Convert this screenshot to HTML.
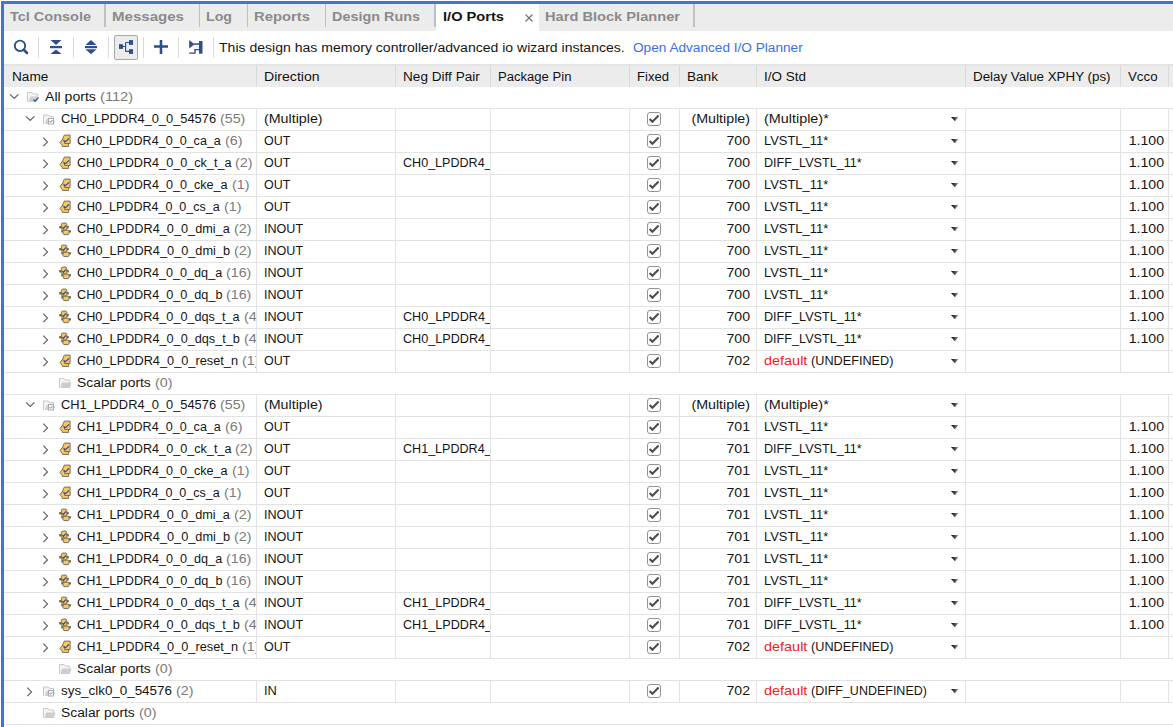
<!DOCTYPE html>
<html><head><meta charset="utf-8"><style>
html,body{margin:0;padding:0;background:#fff;width:1173px;height:727px;overflow:hidden;position:relative}
.r{position:absolute;display:block}
.t{position:absolute;white-space:nowrap;font-family:"Liberation Sans",sans-serif;font-size:12.5px;line-height:16px;color:#141414}
.clip{position:absolute;overflow:hidden}
</style></head><body>
<div class="r" style="left:1px;top:1px;width:1172px;height:3px;background:#4076cc;"></div>
<div class="r" style="left:1px;top:1px;width:3px;height:726px;background:#4076cc;"></div>
<div class="r" style="left:4px;top:4px;width:1169px;height:27px;background:#ececec;"></div>
<div class="r" style="left:104px;top:4px;width:2px;height:23px;background:#c0c0c0;"></div>
<div class="r" style="left:199px;top:4px;width:1px;height:23px;background:#c0c0c0;"></div>
<div class="r" style="left:247px;top:4px;width:1px;height:23px;background:#c0c0c0;"></div>
<div class="r" style="left:325px;top:4px;width:1px;height:23px;background:#c0c0c0;"></div>
<div class="r" style="left:434px;top:4px;width:2px;height:23px;background:#c0c0c0;"></div>
<div class="r" style="left:693px;top:4px;width:2px;height:23px;background:#c0c0c0;"></div>
<div class="r" style="left:436px;top:4px;width:103px;height:27px;background:#ffffff;"></div>
<div class="t" style="left:10px;top:9px;color:#8a8a8a;font-weight:bold;font-size:13.0px;transform:scaleX(1.1139);transform-origin:0 0;">Tcl Console</div>
<div class="t" style="left:112px;top:9px;color:#8a8a8a;font-weight:bold;font-size:13.0px;transform:scaleX(1.1584);transform-origin:0 0;">Messages</div>
<div class="t" style="left:206px;top:9px;color:#8a8a8a;font-weight:bold;font-size:13.0px;transform:scaleX(1.0911);transform-origin:0 0;">Log</div>
<div class="t" style="left:254px;top:9px;color:#8a8a8a;font-weight:bold;font-size:13.0px;transform:scaleX(1.1399);transform-origin:0 0;">Reports</div>
<div class="t" style="left:332px;top:9px;color:#8a8a8a;font-weight:bold;font-size:13.0px;transform:scaleX(1.1074);transform-origin:0 0;">Design Runs</div>
<div class="t" style="left:545px;top:9px;color:#8a8a8a;font-weight:bold;font-size:13.0px;transform:scaleX(1.1256);transform-origin:0 0;">Hard Block Planner</div>
<div class="t" style="left:443px;top:9px;font-weight:bold;font-size:13.0px;transform:scaleX(1.1257);transform-origin:0 0;">I/O Ports</div>
<svg class="r" style="left:524px;top:13px" width="11" height="11"><path d="M1.5 1.5L8.5 8.5M8.5 1.5L1.5 8.5" stroke="#737373" stroke-width="1.2" fill="none"/></svg>
<div class="r" style="left:38px;top:37px;width:1px;height:21px;background:#dadada;"></div>
<div class="r" style="left:73px;top:37px;width:1px;height:21px;background:#dadada;"></div>
<div class="r" style="left:108px;top:37px;width:1px;height:21px;background:#dadada;"></div>
<div class="r" style="left:143px;top:37px;width:1px;height:21px;background:#dadada;"></div>
<div class="r" style="left:178px;top:37px;width:1px;height:21px;background:#dadada;"></div>
<div class="r" style="left:213px;top:37px;width:1px;height:21px;background:#dadada;"></div>
<svg class="r" style="left:12px;top:38px" width="18" height="18"><circle cx="8" cy="7.8" r="5.2" stroke="#2d4e8c" stroke-width="1.9" fill="none"/><path d="M12 12L15 15" stroke="#2d4e8c" stroke-width="2.6" stroke-linecap="round"/></svg>
<svg class="r" style="left:49px;top:39px" width="15" height="17"><path d="M1.5 1H12.5L7 6Z" fill="#2d4e8c"/><rect x="1" y="7" width="12" height="2.2" fill="#2d4e8c"/><path d="M1.5 15H12.5L7 10.5Z" fill="#2d4e8c"/></svg>
<svg class="r" style="left:84px;top:39px" width="15" height="17"><path d="M1.5 6H12.5L7 1Z" fill="#2d4e8c"/><rect x="1" y="7" width="12" height="2.2" fill="#2d4e8c"/><path d="M1.5 10.2H12.5L7 15.2Z" fill="#2d4e8c"/></svg>
<div class="r" style="left:114px;top:35px;width:22px;height:23px;background:#ececec;border:1px solid #a9a9a9;border-radius:2px"></div>
<svg class="r" style="left:118px;top:39px" width="17" height="17"><rect x="1" y="5.2" width="4" height="4.7" fill="#2d4e8c"/><rect x="11" y="1.1" width="4" height="4.8" fill="#2d4e8c"/><rect x="11" y="10.2" width="4" height="4.7" fill="#2d4e8c"/><path d="M5 7.5H7.6M7.6 3.5V12.8M7.6 3.5H11M7.6 12.4H11" stroke="#2d4e8c" stroke-width="1.1" fill="none"/></svg>
<svg class="r" style="left:153px;top:39px" width="16" height="16"><path d="M1 7.5H15M8 1V15" stroke="#2d4e8c" stroke-width="2.6" fill="none"/></svg>
<svg class="r" style="left:188px;top:39px" width="16" height="16"><path d="M1.2 1.1L6.5 5.2L1.2 9.4Z" fill="#2d4e8c"/><rect x="6" y="4.3" width="5.5" height="1.5" fill="#2d4e8c"/><rect x="11" y="2" width="3.5" height="12.7" fill="#2d4e8c"/><path d="M1.2 14.1H7V10.6H11" stroke="#2d4e8c" stroke-width="1.4" fill="none"/></svg>
<div class="t" style="left:219px;top:40px;transform:scaleX(1.1230);transform-origin:0 0;">This design has memory controller/advanced io wizard instances.</div>
<div class="t" style="left:633px;top:40px;color:#3a6ee8;transform:scaleX(1.0904);transform-origin:0 0;">Open Advanced I/O Planner</div>
<div class="r" style="left:4px;top:64px;width:1169px;height:23px;background:#ececec;"></div>
<div class="r" style="left:4px;top:64px;width:1169px;height:2px;background:#e3e3e3;"></div>
<div class="r" style="left:256px;top:66px;width:1px;height:21px;background:#dadada;"></div>
<div class="r" style="left:395px;top:66px;width:1px;height:21px;background:#dadada;"></div>
<div class="r" style="left:490px;top:66px;width:1px;height:21px;background:#dadada;"></div>
<div class="r" style="left:629px;top:66px;width:1px;height:21px;background:#dadada;"></div>
<div class="r" style="left:679px;top:66px;width:1px;height:21px;background:#dadada;"></div>
<div class="r" style="left:756px;top:66px;width:1px;height:21px;background:#dadada;"></div>
<div class="r" style="left:965px;top:66px;width:1px;height:21px;background:#dadada;"></div>
<div class="r" style="left:1120px;top:66px;width:1px;height:21px;background:#dadada;"></div>
<div class="r" style="left:1168px;top:66px;width:1px;height:21px;background:#dadada;"></div>
<div class="t" style="left:12px;top:69px;color:#111;transform:scaleX(1.0904);transform-origin:0 0;">Name</div>
<div class="t" style="left:264px;top:69px;color:#111;transform:scaleX(1.1289);transform-origin:0 0;">Direction</div>
<div class="t" style="left:403px;top:69px;color:#111;transform:scaleX(1.0874);transform-origin:0 0;">Neg Diff Pair</div>
<div class="t" style="left:498px;top:69px;color:#111;transform:scaleX(1.0461);transform-origin:0 0;">Package Pin</div>
<div class="t" style="left:637px;top:69px;color:#111;transform:scaleX(1.0450);transform-origin:0 0;">Fixed</div>
<div class="t" style="left:687px;top:69px;color:#111;transform:scaleX(1.0861);transform-origin:0 0;">Bank</div>
<div class="t" style="left:764px;top:69px;color:#111;transform:scaleX(1.0771);transform-origin:0 0;">I/O Std</div>
<div class="t" style="left:973px;top:69px;color:#111;transform:scaleX(1.0680);transform-origin:0 0;">Delay Value XPHY (ps)</div>
<div class="t" style="left:1128px;top:69px;color:#111;transform:scaleX(1.0630);transform-origin:0 0;">Vcco</div>
<svg width="0" height="0" style="position:absolute"><defs><linearGradient id="ag" x1="0" x2="1"><stop offset="0" stop-color="#000"/><stop offset="1" stop-color="#9a9a9a"/></linearGradient></defs></svg>
<div class="r" style="left:4px;top:108px;width:1169px;height:1px;background:#e3e3e3;"></div>
<svg class="r" style="left:9px;top:93px" width="11" height="8"><path d="M1 1.3L5.2 5.5L9.4 1.3" stroke="#626262" stroke-width="1.2" fill="none"/></svg>
<svg class="r" style="left:27px;top:92px" width="13" height="11"><path d="M0.5 10V0.5H5L6 2H10.5V5" stroke="#cacaca" stroke-width="1" fill="#f4f4f4"/><path d="M1.5 10L3 4.5H11L10 10Z" fill="#d0d0d0"/><path d="M6.5 7.5L8 9.2L11.5 5.5" stroke="#3b5fa8" stroke-width="1.4" fill="none"/></svg>
<div class="clip" style="left:4px;top:87px;width:252px;height:21px">
<div class="t" style="left:41px;top:2px;transform:scaleX(1.1270);transform-origin:0 0;">All ports</div>
<div class="t" style="left:95.8125px;top:2px;color:#7a7a7a;transform:scaleX(1.1730);transform-origin:0 0;">(112)</div>
</div>
<div class="r" style="left:4px;top:130px;width:1169px;height:1px;background:#e3e3e3;"></div>
<div class="r" style="left:256px;top:109px;width:1px;height:21px;background:#e3e3e3;"></div>
<div class="r" style="left:395px;top:109px;width:1px;height:21px;background:#e3e3e3;"></div>
<div class="r" style="left:490px;top:109px;width:1px;height:21px;background:#e3e3e3;"></div>
<div class="r" style="left:629px;top:109px;width:1px;height:21px;background:#e3e3e3;"></div>
<div class="r" style="left:679px;top:109px;width:1px;height:21px;background:#e3e3e3;"></div>
<div class="r" style="left:756px;top:109px;width:1px;height:21px;background:#e3e3e3;"></div>
<div class="r" style="left:965px;top:109px;width:1px;height:21px;background:#e3e3e3;"></div>
<div class="r" style="left:1120px;top:109px;width:1px;height:21px;background:#e3e3e3;"></div>
<div class="r" style="left:1168px;top:109px;width:1px;height:21px;background:#e3e3e3;"></div>
<svg class="r" style="left:25px;top:115px" width="11" height="8"><path d="M1 1.3L5.2 5.5L9.4 1.3" stroke="#626262" stroke-width="1.2" fill="none"/></svg>
<svg class="r" style="left:43px;top:114px" width="13" height="11"><path d="M0.5 10V1H5.5L6.5 2.5H10.5V5" stroke="#c9c9c9" stroke-width="1" fill="#f3f3f3"/><path d="M2 10L3.5 5H7V10Z" fill="#cfcfcf"/><rect x="5.5" y="4.5" width="5" height="5.5" fill="#fff" stroke="#aaa" stroke-width="1"/><path d="M6.7 7.3L7.7 8.3L9.4 6.2" stroke="#4a6cb0" stroke-width="0.9" fill="none"/><path d="M10.5 6L12 7.3L10.5 8.6" fill="#aaa"/></svg>
<div class="clip" style="left:4px;top:109px;width:252px;height:21px">
<div class="t" style="left:57px;top:2px;transform:scaleX(1.0280);transform-origin:0 0;">CH0_LPDDR4_0_0_54576</div>
<div class="t" style="left:215.953125px;top:2px;color:#7a7a7a;transform:scaleX(1.1384);transform-origin:0 0;">(55)</div>
</div>
<div class="t" style="left:264px;top:111px;transform:scaleX(1.1395);transform-origin:0 0;">(Multiple)</div>
<svg class="r" style="left:647px;top:112px" width="14" height="14"><rect x="0.5" y="0.5" width="13" height="13" rx="2.5" fill="#fff" stroke="#939393" stroke-width="1"/><path d="M2.6 6.9L5.4 9.7L11.6 3.5" stroke="#4e4e4e" stroke-width="2.1" fill="none"/></svg>
<div class="t" style="left:450px;width:300px;text-align:right;top:111px;transform:scaleX(1.1395);transform-origin:100% 0;">(Multiple)</div>
<div class="t" style="left:764px;top:111px;transform:scaleX(1.1508);transform-origin:0 0;">(Multiple)*</div>
<svg class="r" style="left:951px;top:117px" width="8" height="5"><path d="M0 0H7.5L3.8 4.2Z" fill="url(#ag)"/></svg>
<div class="r" style="left:4px;top:152px;width:1169px;height:1px;background:#e3e3e3;"></div>
<div class="r" style="left:256px;top:131px;width:1px;height:21px;background:#e3e3e3;"></div>
<div class="r" style="left:395px;top:131px;width:1px;height:21px;background:#e3e3e3;"></div>
<div class="r" style="left:490px;top:131px;width:1px;height:21px;background:#e3e3e3;"></div>
<div class="r" style="left:629px;top:131px;width:1px;height:21px;background:#e3e3e3;"></div>
<div class="r" style="left:679px;top:131px;width:1px;height:21px;background:#e3e3e3;"></div>
<div class="r" style="left:756px;top:131px;width:1px;height:21px;background:#e3e3e3;"></div>
<div class="r" style="left:965px;top:131px;width:1px;height:21px;background:#e3e3e3;"></div>
<div class="r" style="left:1120px;top:131px;width:1px;height:21px;background:#e3e3e3;"></div>
<div class="r" style="left:1168px;top:131px;width:1px;height:21px;background:#e3e3e3;"></div>
<svg class="r" style="left:42px;top:137px" width="8" height="11"><path d="M1.3 0.7L5.5 4.9L1.3 9.1" stroke="#626262" stroke-width="1.2" fill="none"/></svg>
<svg class="r" style="left:59px;top:134px" width="13" height="14"><path d="M3.2 5.6L1 8.5L3.2 11.2V12.4H9.6V5.6Z" fill="#f9c65e" stroke="#6e6a62" stroke-width="0.95"/><path d="M5.3 1.1H11.1V9.5H5.6V6.8L3.4 5.6Z" fill="#f9c65e" stroke="#6e6a62" stroke-width="0.95"/><path d="M4.6 6.8L6.6 7.6L10 4.4" stroke="#2f4f8a" stroke-width="1.25" fill="none"/></svg>
<div class="clip" style="left:4px;top:131px;width:252px;height:21px">
<div class="t" style="left:73px;top:2px;transform:scaleX(1.0049);transform-origin:0 0;">CH0_LPDDR4_0_0_ca_a</div>
<div class="t" style="left:220.78125px;top:2px;color:#7a7a7a;transform:scaleX(1.1431);transform-origin:0 0;">(6)</div>
</div>
<div class="t" style="left:264px;top:133px;transform:scaleX(0.9947);transform-origin:0 0;">OUT</div>
<svg class="r" style="left:647px;top:134px" width="14" height="14"><rect x="0.5" y="0.5" width="13" height="13" rx="2.5" fill="#fff" stroke="#939393" stroke-width="1"/><path d="M2.6 6.9L5.4 9.7L11.6 3.5" stroke="#4e4e4e" stroke-width="2.1" fill="none"/></svg>
<div class="t" style="left:450px;width:300px;text-align:right;top:133px;transform:scaleX(1.1281);transform-origin:100% 0;">700</div>
<div class="t" style="left:764px;top:133px;transform:scaleX(1.0342);transform-origin:0 0;">LVSTL_11*</div>
<svg class="r" style="left:951px;top:139px" width="8" height="5"><path d="M0 0H7.5L3.8 4.2Z" fill="url(#ag)"/></svg>
<div class="t" style="left:864px;width:300px;text-align:right;top:133px;transform:scaleX(1.1284);transform-origin:100% 0;">1.100</div>
<div class="r" style="left:4px;top:174px;width:1169px;height:1px;background:#e3e3e3;"></div>
<div class="r" style="left:256px;top:153px;width:1px;height:21px;background:#e3e3e3;"></div>
<div class="r" style="left:395px;top:153px;width:1px;height:21px;background:#e3e3e3;"></div>
<div class="r" style="left:490px;top:153px;width:1px;height:21px;background:#e3e3e3;"></div>
<div class="r" style="left:629px;top:153px;width:1px;height:21px;background:#e3e3e3;"></div>
<div class="r" style="left:679px;top:153px;width:1px;height:21px;background:#e3e3e3;"></div>
<div class="r" style="left:756px;top:153px;width:1px;height:21px;background:#e3e3e3;"></div>
<div class="r" style="left:965px;top:153px;width:1px;height:21px;background:#e3e3e3;"></div>
<div class="r" style="left:1120px;top:153px;width:1px;height:21px;background:#e3e3e3;"></div>
<div class="r" style="left:1168px;top:153px;width:1px;height:21px;background:#e3e3e3;"></div>
<svg class="r" style="left:42px;top:159px" width="8" height="11"><path d="M1.3 0.7L5.5 4.9L1.3 9.1" stroke="#626262" stroke-width="1.2" fill="none"/></svg>
<svg class="r" style="left:59px;top:156px" width="13" height="14"><path d="M3.2 5.6L1 8.5L3.2 11.2V12.4H9.6V5.6Z" fill="#f9c65e" stroke="#6e6a62" stroke-width="0.95"/><path d="M5.3 1.1H11.1V9.5H5.6V6.8L3.4 5.6Z" fill="#f9c65e" stroke="#6e6a62" stroke-width="0.95"/><path d="M4.6 6.8L6.6 7.6L10 4.4" stroke="#2f4f8a" stroke-width="1.25" fill="none"/></svg>
<div class="clip" style="left:4px;top:153px;width:252px;height:21px">
<div class="t" style="left:73px;top:2px;transform:scaleX(1.0103);transform-origin:0 0;">CH0_LPDDR4_0_0_ck_t_a</div>
<div class="t" style="left:231.375px;top:2px;color:#7a7a7a;transform:scaleX(1.1431);transform-origin:0 0;">(2)</div>
</div>
<div class="t" style="left:264px;top:155px;transform:scaleX(0.9947);transform-origin:0 0;">OUT</div>
<div class="clip" style="left:396px;top:153px;width:94px;height:21px">
<div class="t" style="left:7px;top:2px;transform:scaleX(1.0048);transform-origin:0 0;">CH0_LPDDR4_0_0_ck_c_a</div>
</div>
<svg class="r" style="left:647px;top:156px" width="14" height="14"><rect x="0.5" y="0.5" width="13" height="13" rx="2.5" fill="#fff" stroke="#939393" stroke-width="1"/><path d="M2.6 6.9L5.4 9.7L11.6 3.5" stroke="#4e4e4e" stroke-width="2.1" fill="none"/></svg>
<div class="t" style="left:450px;width:300px;text-align:right;top:155px;transform:scaleX(1.1281);transform-origin:100% 0;">700</div>
<div class="t" style="left:764px;top:155px;transform:scaleX(1.0094);transform-origin:0 0;">DIFF_LVSTL_11*</div>
<svg class="r" style="left:951px;top:161px" width="8" height="5"><path d="M0 0H7.5L3.8 4.2Z" fill="url(#ag)"/></svg>
<div class="t" style="left:864px;width:300px;text-align:right;top:155px;transform:scaleX(1.1284);transform-origin:100% 0;">1.100</div>
<div class="r" style="left:4px;top:196px;width:1169px;height:1px;background:#e3e3e3;"></div>
<div class="r" style="left:256px;top:175px;width:1px;height:21px;background:#e3e3e3;"></div>
<div class="r" style="left:395px;top:175px;width:1px;height:21px;background:#e3e3e3;"></div>
<div class="r" style="left:490px;top:175px;width:1px;height:21px;background:#e3e3e3;"></div>
<div class="r" style="left:629px;top:175px;width:1px;height:21px;background:#e3e3e3;"></div>
<div class="r" style="left:679px;top:175px;width:1px;height:21px;background:#e3e3e3;"></div>
<div class="r" style="left:756px;top:175px;width:1px;height:21px;background:#e3e3e3;"></div>
<div class="r" style="left:965px;top:175px;width:1px;height:21px;background:#e3e3e3;"></div>
<div class="r" style="left:1120px;top:175px;width:1px;height:21px;background:#e3e3e3;"></div>
<div class="r" style="left:1168px;top:175px;width:1px;height:21px;background:#e3e3e3;"></div>
<svg class="r" style="left:42px;top:181px" width="8" height="11"><path d="M1.3 0.7L5.5 4.9L1.3 9.1" stroke="#626262" stroke-width="1.2" fill="none"/></svg>
<svg class="r" style="left:59px;top:178px" width="13" height="14"><path d="M3.2 5.6L1 8.5L3.2 11.2V12.4H9.6V5.6Z" fill="#f9c65e" stroke="#6e6a62" stroke-width="0.95"/><path d="M5.3 1.1H11.1V9.5H5.6V6.8L3.4 5.6Z" fill="#f9c65e" stroke="#6e6a62" stroke-width="0.95"/><path d="M4.6 6.8L6.6 7.6L10 4.4" stroke="#2f4f8a" stroke-width="1.25" fill="none"/></svg>
<div class="clip" style="left:4px;top:175px;width:252px;height:21px">
<div class="t" style="left:73px;top:2px;transform:scaleX(1.0079);transform-origin:0 0;">CH0_LPDDR4_0_0_cke_a</div>
<div class="t" style="left:227.515625px;top:2px;color:#7a7a7a;transform:scaleX(1.1431);transform-origin:0 0;">(1)</div>
</div>
<div class="t" style="left:264px;top:177px;transform:scaleX(0.9947);transform-origin:0 0;">OUT</div>
<svg class="r" style="left:647px;top:178px" width="14" height="14"><rect x="0.5" y="0.5" width="13" height="13" rx="2.5" fill="#fff" stroke="#939393" stroke-width="1"/><path d="M2.6 6.9L5.4 9.7L11.6 3.5" stroke="#4e4e4e" stroke-width="2.1" fill="none"/></svg>
<div class="t" style="left:450px;width:300px;text-align:right;top:177px;transform:scaleX(1.1281);transform-origin:100% 0;">700</div>
<div class="t" style="left:764px;top:177px;transform:scaleX(1.0342);transform-origin:0 0;">LVSTL_11*</div>
<svg class="r" style="left:951px;top:183px" width="8" height="5"><path d="M0 0H7.5L3.8 4.2Z" fill="url(#ag)"/></svg>
<div class="t" style="left:864px;width:300px;text-align:right;top:177px;transform:scaleX(1.1284);transform-origin:100% 0;">1.100</div>
<div class="r" style="left:4px;top:218px;width:1169px;height:1px;background:#e3e3e3;"></div>
<div class="r" style="left:256px;top:197px;width:1px;height:21px;background:#e3e3e3;"></div>
<div class="r" style="left:395px;top:197px;width:1px;height:21px;background:#e3e3e3;"></div>
<div class="r" style="left:490px;top:197px;width:1px;height:21px;background:#e3e3e3;"></div>
<div class="r" style="left:629px;top:197px;width:1px;height:21px;background:#e3e3e3;"></div>
<div class="r" style="left:679px;top:197px;width:1px;height:21px;background:#e3e3e3;"></div>
<div class="r" style="left:756px;top:197px;width:1px;height:21px;background:#e3e3e3;"></div>
<div class="r" style="left:965px;top:197px;width:1px;height:21px;background:#e3e3e3;"></div>
<div class="r" style="left:1120px;top:197px;width:1px;height:21px;background:#e3e3e3;"></div>
<div class="r" style="left:1168px;top:197px;width:1px;height:21px;background:#e3e3e3;"></div>
<svg class="r" style="left:42px;top:203px" width="8" height="11"><path d="M1.3 0.7L5.5 4.9L1.3 9.1" stroke="#626262" stroke-width="1.2" fill="none"/></svg>
<svg class="r" style="left:59px;top:200px" width="13" height="14"><path d="M3.2 5.6L1 8.5L3.2 11.2V12.4H9.6V5.6Z" fill="#f9c65e" stroke="#6e6a62" stroke-width="0.95"/><path d="M5.3 1.1H11.1V9.5H5.6V6.8L3.4 5.6Z" fill="#f9c65e" stroke="#6e6a62" stroke-width="0.95"/><path d="M4.6 6.8L6.6 7.6L10 4.4" stroke="#2f4f8a" stroke-width="1.25" fill="none"/></svg>
<div class="clip" style="left:4px;top:197px;width:252px;height:21px">
<div class="t" style="left:73px;top:2px;transform:scaleX(1.0020);transform-origin:0 0;">CH0_LPDDR4_0_0_cs_a</div>
<div class="t" style="left:219.65625px;top:2px;color:#7a7a7a;transform:scaleX(1.1431);transform-origin:0 0;">(1)</div>
</div>
<div class="t" style="left:264px;top:199px;transform:scaleX(0.9947);transform-origin:0 0;">OUT</div>
<svg class="r" style="left:647px;top:200px" width="14" height="14"><rect x="0.5" y="0.5" width="13" height="13" rx="2.5" fill="#fff" stroke="#939393" stroke-width="1"/><path d="M2.6 6.9L5.4 9.7L11.6 3.5" stroke="#4e4e4e" stroke-width="2.1" fill="none"/></svg>
<div class="t" style="left:450px;width:300px;text-align:right;top:199px;transform:scaleX(1.1281);transform-origin:100% 0;">700</div>
<div class="t" style="left:764px;top:199px;transform:scaleX(1.0342);transform-origin:0 0;">LVSTL_11*</div>
<svg class="r" style="left:951px;top:205px" width="8" height="5"><path d="M0 0H7.5L3.8 4.2Z" fill="url(#ag)"/></svg>
<div class="t" style="left:864px;width:300px;text-align:right;top:199px;transform:scaleX(1.1284);transform-origin:100% 0;">1.100</div>
<div class="r" style="left:4px;top:240px;width:1169px;height:1px;background:#e3e3e3;"></div>
<div class="r" style="left:256px;top:219px;width:1px;height:21px;background:#e3e3e3;"></div>
<div class="r" style="left:395px;top:219px;width:1px;height:21px;background:#e3e3e3;"></div>
<div class="r" style="left:490px;top:219px;width:1px;height:21px;background:#e3e3e3;"></div>
<div class="r" style="left:629px;top:219px;width:1px;height:21px;background:#e3e3e3;"></div>
<div class="r" style="left:679px;top:219px;width:1px;height:21px;background:#e3e3e3;"></div>
<div class="r" style="left:756px;top:219px;width:1px;height:21px;background:#e3e3e3;"></div>
<div class="r" style="left:965px;top:219px;width:1px;height:21px;background:#e3e3e3;"></div>
<div class="r" style="left:1120px;top:219px;width:1px;height:21px;background:#e3e3e3;"></div>
<div class="r" style="left:1168px;top:219px;width:1px;height:21px;background:#e3e3e3;"></div>
<svg class="r" style="left:42px;top:225px" width="8" height="11"><path d="M1.3 0.7L5.5 4.9L1.3 9.1" stroke="#626262" stroke-width="1.2" fill="none"/></svg>
<svg class="r" style="left:59px;top:222px" width="13" height="14"><rect x="0.2" y="4" width="2.3" height="2.4" fill="#6e6a62"/><rect x="7.4" y="4" width="2.4" height="2.4" fill="#6e6a62"/><rect x="2.2" y="8.2" width="2.3" height="2.2" fill="#6e6a62"/><rect x="9.6" y="8.2" width="2.4" height="2.2" fill="#6e6a62"/><path d="M4.8 8.1H9.3L10 9.2V11.6L9.3 12.6H4.8L4.1 11.6V9.2Z" fill="#f9c65e" stroke="#6e6a62" stroke-width="0.95"/><path d="M3.2 1.1H7L7.8 2.2V6.9L7 7.9H3.2L2.4 6.9V2.2Z" fill="#f9c65e" stroke="#6e6a62" stroke-width="0.95"/><path d="M3.3 5.2L4.5 6.3L6.9 3.3" stroke="#2f4f8a" stroke-width="1.25" fill="none"/></svg>
<div class="clip" style="left:4px;top:219px;width:252px;height:21px">
<div class="t" style="left:73px;top:2px;transform:scaleX(1.0180);transform-origin:0 0;">CH0_LPDDR4_0_0_dmi_a</div>
<div class="t" style="left:229.71875px;top:2px;color:#7a7a7a;transform:scaleX(1.1431);transform-origin:0 0;">(2)</div>
</div>
<div class="t" style="left:264px;top:221px;transform:scaleX(1.0056);transform-origin:0 0;">INOUT</div>
<svg class="r" style="left:647px;top:222px" width="14" height="14"><rect x="0.5" y="0.5" width="13" height="13" rx="2.5" fill="#fff" stroke="#939393" stroke-width="1"/><path d="M2.6 6.9L5.4 9.7L11.6 3.5" stroke="#4e4e4e" stroke-width="2.1" fill="none"/></svg>
<div class="t" style="left:450px;width:300px;text-align:right;top:221px;transform:scaleX(1.1281);transform-origin:100% 0;">700</div>
<div class="t" style="left:764px;top:221px;transform:scaleX(1.0342);transform-origin:0 0;">LVSTL_11*</div>
<svg class="r" style="left:951px;top:227px" width="8" height="5"><path d="M0 0H7.5L3.8 4.2Z" fill="url(#ag)"/></svg>
<div class="t" style="left:864px;width:300px;text-align:right;top:221px;transform:scaleX(1.1284);transform-origin:100% 0;">1.100</div>
<div class="r" style="left:4px;top:262px;width:1169px;height:1px;background:#e3e3e3;"></div>
<div class="r" style="left:256px;top:241px;width:1px;height:21px;background:#e3e3e3;"></div>
<div class="r" style="left:395px;top:241px;width:1px;height:21px;background:#e3e3e3;"></div>
<div class="r" style="left:490px;top:241px;width:1px;height:21px;background:#e3e3e3;"></div>
<div class="r" style="left:629px;top:241px;width:1px;height:21px;background:#e3e3e3;"></div>
<div class="r" style="left:679px;top:241px;width:1px;height:21px;background:#e3e3e3;"></div>
<div class="r" style="left:756px;top:241px;width:1px;height:21px;background:#e3e3e3;"></div>
<div class="r" style="left:965px;top:241px;width:1px;height:21px;background:#e3e3e3;"></div>
<div class="r" style="left:1120px;top:241px;width:1px;height:21px;background:#e3e3e3;"></div>
<div class="r" style="left:1168px;top:241px;width:1px;height:21px;background:#e3e3e3;"></div>
<svg class="r" style="left:42px;top:247px" width="8" height="11"><path d="M1.3 0.7L5.5 4.9L1.3 9.1" stroke="#626262" stroke-width="1.2" fill="none"/></svg>
<svg class="r" style="left:59px;top:244px" width="13" height="14"><rect x="0.2" y="4" width="2.3" height="2.4" fill="#6e6a62"/><rect x="7.4" y="4" width="2.4" height="2.4" fill="#6e6a62"/><rect x="2.2" y="8.2" width="2.3" height="2.2" fill="#6e6a62"/><rect x="9.6" y="8.2" width="2.4" height="2.2" fill="#6e6a62"/><path d="M4.8 8.1H9.3L10 9.2V11.6L9.3 12.6H4.8L4.1 11.6V9.2Z" fill="#f9c65e" stroke="#6e6a62" stroke-width="0.95"/><path d="M3.2 1.1H7L7.8 2.2V6.9L7 7.9H3.2L2.4 6.9V2.2Z" fill="#f9c65e" stroke="#6e6a62" stroke-width="0.95"/><path d="M3.3 5.2L4.5 6.3L6.9 3.3" stroke="#2f4f8a" stroke-width="1.25" fill="none"/></svg>
<div class="clip" style="left:4px;top:241px;width:252px;height:21px">
<div class="t" style="left:73px;top:2px;transform:scaleX(1.0199);transform-origin:0 0;">CH0_LPDDR4_0_0_dmi_b</div>
<div class="t" style="left:230.0px;top:2px;color:#7a7a7a;transform:scaleX(1.1431);transform-origin:0 0;">(2)</div>
</div>
<div class="t" style="left:264px;top:243px;transform:scaleX(1.0056);transform-origin:0 0;">INOUT</div>
<svg class="r" style="left:647px;top:244px" width="14" height="14"><rect x="0.5" y="0.5" width="13" height="13" rx="2.5" fill="#fff" stroke="#939393" stroke-width="1"/><path d="M2.6 6.9L5.4 9.7L11.6 3.5" stroke="#4e4e4e" stroke-width="2.1" fill="none"/></svg>
<div class="t" style="left:450px;width:300px;text-align:right;top:243px;transform:scaleX(1.1281);transform-origin:100% 0;">700</div>
<div class="t" style="left:764px;top:243px;transform:scaleX(1.0342);transform-origin:0 0;">LVSTL_11*</div>
<svg class="r" style="left:951px;top:249px" width="8" height="5"><path d="M0 0H7.5L3.8 4.2Z" fill="url(#ag)"/></svg>
<div class="t" style="left:864px;width:300px;text-align:right;top:243px;transform:scaleX(1.1284);transform-origin:100% 0;">1.100</div>
<div class="r" style="left:4px;top:284px;width:1169px;height:1px;background:#e3e3e3;"></div>
<div class="r" style="left:256px;top:263px;width:1px;height:21px;background:#e3e3e3;"></div>
<div class="r" style="left:395px;top:263px;width:1px;height:21px;background:#e3e3e3;"></div>
<div class="r" style="left:490px;top:263px;width:1px;height:21px;background:#e3e3e3;"></div>
<div class="r" style="left:629px;top:263px;width:1px;height:21px;background:#e3e3e3;"></div>
<div class="r" style="left:679px;top:263px;width:1px;height:21px;background:#e3e3e3;"></div>
<div class="r" style="left:756px;top:263px;width:1px;height:21px;background:#e3e3e3;"></div>
<div class="r" style="left:965px;top:263px;width:1px;height:21px;background:#e3e3e3;"></div>
<div class="r" style="left:1120px;top:263px;width:1px;height:21px;background:#e3e3e3;"></div>
<div class="r" style="left:1168px;top:263px;width:1px;height:21px;background:#e3e3e3;"></div>
<svg class="r" style="left:42px;top:269px" width="8" height="11"><path d="M1.3 0.7L5.5 4.9L1.3 9.1" stroke="#626262" stroke-width="1.2" fill="none"/></svg>
<svg class="r" style="left:59px;top:266px" width="13" height="14"><rect x="0.2" y="4" width="2.3" height="2.4" fill="#6e6a62"/><rect x="7.4" y="4" width="2.4" height="2.4" fill="#6e6a62"/><rect x="2.2" y="8.2" width="2.3" height="2.2" fill="#6e6a62"/><rect x="9.6" y="8.2" width="2.4" height="2.2" fill="#6e6a62"/><path d="M4.8 8.1H9.3L10 9.2V11.6L9.3 12.6H4.8L4.1 11.6V9.2Z" fill="#f9c65e" stroke="#6e6a62" stroke-width="0.95"/><path d="M3.2 1.1H7L7.8 2.2V6.9L7 7.9H3.2L2.4 6.9V2.2Z" fill="#f9c65e" stroke="#6e6a62" stroke-width="0.95"/><path d="M3.3 5.2L4.5 6.3L6.9 3.3" stroke="#2f4f8a" stroke-width="1.25" fill="none"/></svg>
<div class="clip" style="left:4px;top:263px;width:252px;height:21px">
<div class="t" style="left:73px;top:2px;transform:scaleX(1.0092);transform-origin:0 0;">CH0_LPDDR4_0_0_dq_a</div>
<div class="t" style="left:222.109375px;top:2px;color:#7a7a7a;transform:scaleX(1.1384);transform-origin:0 0;">(16)</div>
</div>
<div class="t" style="left:264px;top:265px;transform:scaleX(1.0056);transform-origin:0 0;">INOUT</div>
<svg class="r" style="left:647px;top:266px" width="14" height="14"><rect x="0.5" y="0.5" width="13" height="13" rx="2.5" fill="#fff" stroke="#939393" stroke-width="1"/><path d="M2.6 6.9L5.4 9.7L11.6 3.5" stroke="#4e4e4e" stroke-width="2.1" fill="none"/></svg>
<div class="t" style="left:450px;width:300px;text-align:right;top:265px;transform:scaleX(1.1281);transform-origin:100% 0;">700</div>
<div class="t" style="left:764px;top:265px;transform:scaleX(1.0342);transform-origin:0 0;">LVSTL_11*</div>
<svg class="r" style="left:951px;top:271px" width="8" height="5"><path d="M0 0H7.5L3.8 4.2Z" fill="url(#ag)"/></svg>
<div class="t" style="left:864px;width:300px;text-align:right;top:265px;transform:scaleX(1.1284);transform-origin:100% 0;">1.100</div>
<div class="r" style="left:4px;top:306px;width:1169px;height:1px;background:#e3e3e3;"></div>
<div class="r" style="left:256px;top:285px;width:1px;height:21px;background:#e3e3e3;"></div>
<div class="r" style="left:395px;top:285px;width:1px;height:21px;background:#e3e3e3;"></div>
<div class="r" style="left:490px;top:285px;width:1px;height:21px;background:#e3e3e3;"></div>
<div class="r" style="left:629px;top:285px;width:1px;height:21px;background:#e3e3e3;"></div>
<div class="r" style="left:679px;top:285px;width:1px;height:21px;background:#e3e3e3;"></div>
<div class="r" style="left:756px;top:285px;width:1px;height:21px;background:#e3e3e3;"></div>
<div class="r" style="left:965px;top:285px;width:1px;height:21px;background:#e3e3e3;"></div>
<div class="r" style="left:1120px;top:285px;width:1px;height:21px;background:#e3e3e3;"></div>
<div class="r" style="left:1168px;top:285px;width:1px;height:21px;background:#e3e3e3;"></div>
<svg class="r" style="left:42px;top:291px" width="8" height="11"><path d="M1.3 0.7L5.5 4.9L1.3 9.1" stroke="#626262" stroke-width="1.2" fill="none"/></svg>
<svg class="r" style="left:59px;top:288px" width="13" height="14"><rect x="0.2" y="4" width="2.3" height="2.4" fill="#6e6a62"/><rect x="7.4" y="4" width="2.4" height="2.4" fill="#6e6a62"/><rect x="2.2" y="8.2" width="2.3" height="2.2" fill="#6e6a62"/><rect x="9.6" y="8.2" width="2.4" height="2.2" fill="#6e6a62"/><path d="M4.8 8.1H9.3L10 9.2V11.6L9.3 12.6H4.8L4.1 11.6V9.2Z" fill="#f9c65e" stroke="#6e6a62" stroke-width="0.95"/><path d="M3.2 1.1H7L7.8 2.2V6.9L7 7.9H3.2L2.4 6.9V2.2Z" fill="#f9c65e" stroke="#6e6a62" stroke-width="0.95"/><path d="M3.3 5.2L4.5 6.3L6.9 3.3" stroke="#2f4f8a" stroke-width="1.25" fill="none"/></svg>
<div class="clip" style="left:4px;top:285px;width:252px;height:21px">
<div class="t" style="left:73px;top:2px;transform:scaleX(1.0112);transform-origin:0 0;">CH0_LPDDR4_0_0_dq_b</div>
<div class="t" style="left:222.390625px;top:2px;color:#7a7a7a;transform:scaleX(1.1384);transform-origin:0 0;">(16)</div>
</div>
<div class="t" style="left:264px;top:287px;transform:scaleX(1.0056);transform-origin:0 0;">INOUT</div>
<svg class="r" style="left:647px;top:288px" width="14" height="14"><rect x="0.5" y="0.5" width="13" height="13" rx="2.5" fill="#fff" stroke="#939393" stroke-width="1"/><path d="M2.6 6.9L5.4 9.7L11.6 3.5" stroke="#4e4e4e" stroke-width="2.1" fill="none"/></svg>
<div class="t" style="left:450px;width:300px;text-align:right;top:287px;transform:scaleX(1.1281);transform-origin:100% 0;">700</div>
<div class="t" style="left:764px;top:287px;transform:scaleX(1.0342);transform-origin:0 0;">LVSTL_11*</div>
<svg class="r" style="left:951px;top:293px" width="8" height="5"><path d="M0 0H7.5L3.8 4.2Z" fill="url(#ag)"/></svg>
<div class="t" style="left:864px;width:300px;text-align:right;top:287px;transform:scaleX(1.1284);transform-origin:100% 0;">1.100</div>
<div class="r" style="left:4px;top:328px;width:1169px;height:1px;background:#e3e3e3;"></div>
<div class="r" style="left:256px;top:307px;width:1px;height:21px;background:#e3e3e3;"></div>
<div class="r" style="left:395px;top:307px;width:1px;height:21px;background:#e3e3e3;"></div>
<div class="r" style="left:490px;top:307px;width:1px;height:21px;background:#e3e3e3;"></div>
<div class="r" style="left:629px;top:307px;width:1px;height:21px;background:#e3e3e3;"></div>
<div class="r" style="left:679px;top:307px;width:1px;height:21px;background:#e3e3e3;"></div>
<div class="r" style="left:756px;top:307px;width:1px;height:21px;background:#e3e3e3;"></div>
<div class="r" style="left:965px;top:307px;width:1px;height:21px;background:#e3e3e3;"></div>
<div class="r" style="left:1120px;top:307px;width:1px;height:21px;background:#e3e3e3;"></div>
<div class="r" style="left:1168px;top:307px;width:1px;height:21px;background:#e3e3e3;"></div>
<svg class="r" style="left:42px;top:313px" width="8" height="11"><path d="M1.3 0.7L5.5 4.9L1.3 9.1" stroke="#626262" stroke-width="1.2" fill="none"/></svg>
<svg class="r" style="left:59px;top:310px" width="13" height="14"><rect x="0.2" y="4" width="2.3" height="2.4" fill="#6e6a62"/><rect x="7.4" y="4" width="2.4" height="2.4" fill="#6e6a62"/><rect x="2.2" y="8.2" width="2.3" height="2.2" fill="#6e6a62"/><rect x="9.6" y="8.2" width="2.4" height="2.2" fill="#6e6a62"/><path d="M4.8 8.1H9.3L10 9.2V11.6L9.3 12.6H4.8L4.1 11.6V9.2Z" fill="#f9c65e" stroke="#6e6a62" stroke-width="0.95"/><path d="M3.2 1.1H7L7.8 2.2V6.9L7 7.9H3.2L2.4 6.9V2.2Z" fill="#f9c65e" stroke="#6e6a62" stroke-width="0.95"/><path d="M3.3 5.2L4.5 6.3L6.9 3.3" stroke="#2f4f8a" stroke-width="1.25" fill="none"/></svg>
<div class="clip" style="left:4px;top:307px;width:252px;height:21px">
<div class="t" style="left:73px;top:2px;transform:scaleX(1.0129);transform-origin:0 0;">CH0_LPDDR4_0_0_dqs_t_a</div>
<div class="t" style="left:239.53125px;top:2px;color:#7a7a7a;transform:scaleX(1.1431);transform-origin:0 0;">(4)</div>
</div>
<div class="t" style="left:264px;top:309px;transform:scaleX(1.0056);transform-origin:0 0;">INOUT</div>
<div class="clip" style="left:396px;top:307px;width:94px;height:21px">
<div class="t" style="left:7px;top:2px;transform:scaleX(1.0077);transform-origin:0 0;">CH0_LPDDR4_0_0_dqs_c_a</div>
</div>
<svg class="r" style="left:647px;top:310px" width="14" height="14"><rect x="0.5" y="0.5" width="13" height="13" rx="2.5" fill="#fff" stroke="#939393" stroke-width="1"/><path d="M2.6 6.9L5.4 9.7L11.6 3.5" stroke="#4e4e4e" stroke-width="2.1" fill="none"/></svg>
<div class="t" style="left:450px;width:300px;text-align:right;top:309px;transform:scaleX(1.1281);transform-origin:100% 0;">700</div>
<div class="t" style="left:764px;top:309px;transform:scaleX(1.0094);transform-origin:0 0;">DIFF_LVSTL_11*</div>
<svg class="r" style="left:951px;top:315px" width="8" height="5"><path d="M0 0H7.5L3.8 4.2Z" fill="url(#ag)"/></svg>
<div class="t" style="left:864px;width:300px;text-align:right;top:309px;transform:scaleX(1.1284);transform-origin:100% 0;">1.100</div>
<div class="r" style="left:4px;top:350px;width:1169px;height:1px;background:#e3e3e3;"></div>
<div class="r" style="left:256px;top:329px;width:1px;height:21px;background:#e3e3e3;"></div>
<div class="r" style="left:395px;top:329px;width:1px;height:21px;background:#e3e3e3;"></div>
<div class="r" style="left:490px;top:329px;width:1px;height:21px;background:#e3e3e3;"></div>
<div class="r" style="left:629px;top:329px;width:1px;height:21px;background:#e3e3e3;"></div>
<div class="r" style="left:679px;top:329px;width:1px;height:21px;background:#e3e3e3;"></div>
<div class="r" style="left:756px;top:329px;width:1px;height:21px;background:#e3e3e3;"></div>
<div class="r" style="left:965px;top:329px;width:1px;height:21px;background:#e3e3e3;"></div>
<div class="r" style="left:1120px;top:329px;width:1px;height:21px;background:#e3e3e3;"></div>
<div class="r" style="left:1168px;top:329px;width:1px;height:21px;background:#e3e3e3;"></div>
<svg class="r" style="left:42px;top:335px" width="8" height="11"><path d="M1.3 0.7L5.5 4.9L1.3 9.1" stroke="#626262" stroke-width="1.2" fill="none"/></svg>
<svg class="r" style="left:59px;top:332px" width="13" height="14"><rect x="0.2" y="4" width="2.3" height="2.4" fill="#6e6a62"/><rect x="7.4" y="4" width="2.4" height="2.4" fill="#6e6a62"/><rect x="2.2" y="8.2" width="2.3" height="2.2" fill="#6e6a62"/><rect x="9.6" y="8.2" width="2.4" height="2.2" fill="#6e6a62"/><path d="M4.8 8.1H9.3L10 9.2V11.6L9.3 12.6H4.8L4.1 11.6V9.2Z" fill="#f9c65e" stroke="#6e6a62" stroke-width="0.95"/><path d="M3.2 1.1H7L7.8 2.2V6.9L7 7.9H3.2L2.4 6.9V2.2Z" fill="#f9c65e" stroke="#6e6a62" stroke-width="0.95"/><path d="M3.3 5.2L4.5 6.3L6.9 3.3" stroke="#2f4f8a" stroke-width="1.25" fill="none"/></svg>
<div class="clip" style="left:4px;top:329px;width:252px;height:21px">
<div class="t" style="left:73px;top:2px;transform:scaleX(1.0147);transform-origin:0 0;">CH0_LPDDR4_0_0_dqs_t_b</div>
<div class="t" style="left:239.8125px;top:2px;color:#7a7a7a;transform:scaleX(1.1431);transform-origin:0 0;">(4)</div>
</div>
<div class="t" style="left:264px;top:331px;transform:scaleX(1.0056);transform-origin:0 0;">INOUT</div>
<div class="clip" style="left:396px;top:329px;width:94px;height:21px">
<div class="t" style="left:7px;top:2px;transform:scaleX(1.0094);transform-origin:0 0;">CH0_LPDDR4_0_0_dqs_c_b</div>
</div>
<svg class="r" style="left:647px;top:332px" width="14" height="14"><rect x="0.5" y="0.5" width="13" height="13" rx="2.5" fill="#fff" stroke="#939393" stroke-width="1"/><path d="M2.6 6.9L5.4 9.7L11.6 3.5" stroke="#4e4e4e" stroke-width="2.1" fill="none"/></svg>
<div class="t" style="left:450px;width:300px;text-align:right;top:331px;transform:scaleX(1.1281);transform-origin:100% 0;">700</div>
<div class="t" style="left:764px;top:331px;transform:scaleX(1.0094);transform-origin:0 0;">DIFF_LVSTL_11*</div>
<svg class="r" style="left:951px;top:337px" width="8" height="5"><path d="M0 0H7.5L3.8 4.2Z" fill="url(#ag)"/></svg>
<div class="t" style="left:864px;width:300px;text-align:right;top:331px;transform:scaleX(1.1284);transform-origin:100% 0;">1.100</div>
<div class="r" style="left:4px;top:372px;width:1169px;height:1px;background:#e3e3e3;"></div>
<div class="r" style="left:256px;top:351px;width:1px;height:21px;background:#e3e3e3;"></div>
<div class="r" style="left:395px;top:351px;width:1px;height:21px;background:#e3e3e3;"></div>
<div class="r" style="left:490px;top:351px;width:1px;height:21px;background:#e3e3e3;"></div>
<div class="r" style="left:629px;top:351px;width:1px;height:21px;background:#e3e3e3;"></div>
<div class="r" style="left:679px;top:351px;width:1px;height:21px;background:#e3e3e3;"></div>
<div class="r" style="left:756px;top:351px;width:1px;height:21px;background:#e3e3e3;"></div>
<div class="r" style="left:965px;top:351px;width:1px;height:21px;background:#e3e3e3;"></div>
<div class="r" style="left:1120px;top:351px;width:1px;height:21px;background:#e3e3e3;"></div>
<div class="r" style="left:1168px;top:351px;width:1px;height:21px;background:#e3e3e3;"></div>
<svg class="r" style="left:42px;top:357px" width="8" height="11"><path d="M1.3 0.7L5.5 4.9L1.3 9.1" stroke="#626262" stroke-width="1.2" fill="none"/></svg>
<svg class="r" style="left:59px;top:354px" width="13" height="14"><path d="M3.2 5.6L1 8.5L3.2 11.2V12.4H9.6V5.6Z" fill="#f9c65e" stroke="#6e6a62" stroke-width="0.95"/><path d="M5.3 1.1H11.1V9.5H5.6V6.8L3.4 5.6Z" fill="#f9c65e" stroke="#6e6a62" stroke-width="0.95"/><path d="M4.6 6.8L6.6 7.6L10 4.4" stroke="#2f4f8a" stroke-width="1.25" fill="none"/></svg>
<div class="clip" style="left:4px;top:351px;width:252px;height:21px">
<div class="t" style="left:73px;top:2px;transform:scaleX(1.0207);transform-origin:0 0;">CH0_LPDDR4_0_0_reset_n</div>
<div class="t" style="left:237.921875px;top:2px;color:#7a7a7a;transform:scaleX(1.1431);transform-origin:0 0;">(1)</div>
</div>
<div class="t" style="left:264px;top:353px;transform:scaleX(0.9947);transform-origin:0 0;">OUT</div>
<svg class="r" style="left:647px;top:354px" width="14" height="14"><rect x="0.5" y="0.5" width="13" height="13" rx="2.5" fill="#fff" stroke="#939393" stroke-width="1"/><path d="M2.6 6.9L5.4 9.7L11.6 3.5" stroke="#4e4e4e" stroke-width="2.1" fill="none"/></svg>
<div class="t" style="left:450px;width:300px;text-align:right;top:353px;transform:scaleX(1.1281);transform-origin:100% 0;">702</div>
<div class="t" style="left:764px;top:353px;color:#f01c1c;transform:scaleX(1.1553);transform-origin:0 0;">default</div>
<div class="t" style="left:811.28125px;top:353px;transform:scaleX(1.0142);transform-origin:0 0;">(UNDEFINED)</div>
<svg class="r" style="left:951px;top:359px" width="8" height="5"><path d="M0 0H7.5L3.8 4.2Z" fill="url(#ag)"/></svg>
<div class="r" style="left:4px;top:394px;width:1169px;height:1px;background:#e3e3e3;"></div>
<svg class="r" style="left:59px;top:378px" width="13" height="11"><path d="M0.5 10V0.5H5L6 2H10.5V4.5" stroke="#cacaca" stroke-width="1" fill="#f4f4f4"/><path d="M1.5 10L3 4.5H12.5L11 10Z" fill="#cdcdcd"/></svg>
<div class="clip" style="left:4px;top:373px;width:252px;height:21px">
<div class="t" style="left:73px;top:2px;transform:scaleX(1.1063);transform-origin:0 0;">Scalar ports</div>
<div class="t" style="left:150.71875px;top:2px;color:#7a7a7a;transform:scaleX(1.1431);transform-origin:0 0;">(0)</div>
</div>
<div class="r" style="left:4px;top:416px;width:1169px;height:1px;background:#e3e3e3;"></div>
<div class="r" style="left:256px;top:395px;width:1px;height:21px;background:#e3e3e3;"></div>
<div class="r" style="left:395px;top:395px;width:1px;height:21px;background:#e3e3e3;"></div>
<div class="r" style="left:490px;top:395px;width:1px;height:21px;background:#e3e3e3;"></div>
<div class="r" style="left:629px;top:395px;width:1px;height:21px;background:#e3e3e3;"></div>
<div class="r" style="left:679px;top:395px;width:1px;height:21px;background:#e3e3e3;"></div>
<div class="r" style="left:756px;top:395px;width:1px;height:21px;background:#e3e3e3;"></div>
<div class="r" style="left:965px;top:395px;width:1px;height:21px;background:#e3e3e3;"></div>
<div class="r" style="left:1120px;top:395px;width:1px;height:21px;background:#e3e3e3;"></div>
<div class="r" style="left:1168px;top:395px;width:1px;height:21px;background:#e3e3e3;"></div>
<svg class="r" style="left:25px;top:401px" width="11" height="8"><path d="M1 1.3L5.2 5.5L9.4 1.3" stroke="#626262" stroke-width="1.2" fill="none"/></svg>
<svg class="r" style="left:43px;top:400px" width="13" height="11"><path d="M0.5 10V1H5.5L6.5 2.5H10.5V5" stroke="#c9c9c9" stroke-width="1" fill="#f3f3f3"/><path d="M2 10L3.5 5H7V10Z" fill="#cfcfcf"/><rect x="5.5" y="4.5" width="5" height="5.5" fill="#fff" stroke="#aaa" stroke-width="1"/><path d="M6.7 7.3L7.7 8.3L9.4 6.2" stroke="#4a6cb0" stroke-width="0.9" fill="none"/><path d="M10.5 6L12 7.3L10.5 8.6" fill="#aaa"/></svg>
<div class="clip" style="left:4px;top:395px;width:252px;height:21px">
<div class="t" style="left:57px;top:2px;transform:scaleX(1.0280);transform-origin:0 0;">CH1_LPDDR4_0_0_54576</div>
<div class="t" style="left:215.953125px;top:2px;color:#7a7a7a;transform:scaleX(1.1384);transform-origin:0 0;">(55)</div>
</div>
<div class="t" style="left:264px;top:397px;transform:scaleX(1.1395);transform-origin:0 0;">(Multiple)</div>
<svg class="r" style="left:647px;top:398px" width="14" height="14"><rect x="0.5" y="0.5" width="13" height="13" rx="2.5" fill="#fff" stroke="#939393" stroke-width="1"/><path d="M2.6 6.9L5.4 9.7L11.6 3.5" stroke="#4e4e4e" stroke-width="2.1" fill="none"/></svg>
<div class="t" style="left:450px;width:300px;text-align:right;top:397px;transform:scaleX(1.1395);transform-origin:100% 0;">(Multiple)</div>
<div class="t" style="left:764px;top:397px;transform:scaleX(1.1508);transform-origin:0 0;">(Multiple)*</div>
<svg class="r" style="left:951px;top:403px" width="8" height="5"><path d="M0 0H7.5L3.8 4.2Z" fill="url(#ag)"/></svg>
<div class="r" style="left:4px;top:438px;width:1169px;height:1px;background:#e3e3e3;"></div>
<div class="r" style="left:256px;top:417px;width:1px;height:21px;background:#e3e3e3;"></div>
<div class="r" style="left:395px;top:417px;width:1px;height:21px;background:#e3e3e3;"></div>
<div class="r" style="left:490px;top:417px;width:1px;height:21px;background:#e3e3e3;"></div>
<div class="r" style="left:629px;top:417px;width:1px;height:21px;background:#e3e3e3;"></div>
<div class="r" style="left:679px;top:417px;width:1px;height:21px;background:#e3e3e3;"></div>
<div class="r" style="left:756px;top:417px;width:1px;height:21px;background:#e3e3e3;"></div>
<div class="r" style="left:965px;top:417px;width:1px;height:21px;background:#e3e3e3;"></div>
<div class="r" style="left:1120px;top:417px;width:1px;height:21px;background:#e3e3e3;"></div>
<div class="r" style="left:1168px;top:417px;width:1px;height:21px;background:#e3e3e3;"></div>
<svg class="r" style="left:42px;top:423px" width="8" height="11"><path d="M1.3 0.7L5.5 4.9L1.3 9.1" stroke="#626262" stroke-width="1.2" fill="none"/></svg>
<svg class="r" style="left:59px;top:420px" width="13" height="14"><path d="M3.2 5.6L1 8.5L3.2 11.2V12.4H9.6V5.6Z" fill="#f9c65e" stroke="#6e6a62" stroke-width="0.95"/><path d="M5.3 1.1H11.1V9.5H5.6V6.8L3.4 5.6Z" fill="#f9c65e" stroke="#6e6a62" stroke-width="0.95"/><path d="M4.6 6.8L6.6 7.6L10 4.4" stroke="#2f4f8a" stroke-width="1.25" fill="none"/></svg>
<div class="clip" style="left:4px;top:417px;width:252px;height:21px">
<div class="t" style="left:73px;top:2px;transform:scaleX(1.0049);transform-origin:0 0;">CH1_LPDDR4_0_0_ca_a</div>
<div class="t" style="left:220.78125px;top:2px;color:#7a7a7a;transform:scaleX(1.1431);transform-origin:0 0;">(6)</div>
</div>
<div class="t" style="left:264px;top:419px;transform:scaleX(0.9947);transform-origin:0 0;">OUT</div>
<svg class="r" style="left:647px;top:420px" width="14" height="14"><rect x="0.5" y="0.5" width="13" height="13" rx="2.5" fill="#fff" stroke="#939393" stroke-width="1"/><path d="M2.6 6.9L5.4 9.7L11.6 3.5" stroke="#4e4e4e" stroke-width="2.1" fill="none"/></svg>
<div class="t" style="left:450px;width:300px;text-align:right;top:419px;transform:scaleX(1.1281);transform-origin:100% 0;">701</div>
<div class="t" style="left:764px;top:419px;transform:scaleX(1.0342);transform-origin:0 0;">LVSTL_11*</div>
<svg class="r" style="left:951px;top:425px" width="8" height="5"><path d="M0 0H7.5L3.8 4.2Z" fill="url(#ag)"/></svg>
<div class="t" style="left:864px;width:300px;text-align:right;top:419px;transform:scaleX(1.1284);transform-origin:100% 0;">1.100</div>
<div class="r" style="left:4px;top:460px;width:1169px;height:1px;background:#e3e3e3;"></div>
<div class="r" style="left:256px;top:439px;width:1px;height:21px;background:#e3e3e3;"></div>
<div class="r" style="left:395px;top:439px;width:1px;height:21px;background:#e3e3e3;"></div>
<div class="r" style="left:490px;top:439px;width:1px;height:21px;background:#e3e3e3;"></div>
<div class="r" style="left:629px;top:439px;width:1px;height:21px;background:#e3e3e3;"></div>
<div class="r" style="left:679px;top:439px;width:1px;height:21px;background:#e3e3e3;"></div>
<div class="r" style="left:756px;top:439px;width:1px;height:21px;background:#e3e3e3;"></div>
<div class="r" style="left:965px;top:439px;width:1px;height:21px;background:#e3e3e3;"></div>
<div class="r" style="left:1120px;top:439px;width:1px;height:21px;background:#e3e3e3;"></div>
<div class="r" style="left:1168px;top:439px;width:1px;height:21px;background:#e3e3e3;"></div>
<svg class="r" style="left:42px;top:445px" width="8" height="11"><path d="M1.3 0.7L5.5 4.9L1.3 9.1" stroke="#626262" stroke-width="1.2" fill="none"/></svg>
<svg class="r" style="left:59px;top:442px" width="13" height="14"><path d="M3.2 5.6L1 8.5L3.2 11.2V12.4H9.6V5.6Z" fill="#f9c65e" stroke="#6e6a62" stroke-width="0.95"/><path d="M5.3 1.1H11.1V9.5H5.6V6.8L3.4 5.6Z" fill="#f9c65e" stroke="#6e6a62" stroke-width="0.95"/><path d="M4.6 6.8L6.6 7.6L10 4.4" stroke="#2f4f8a" stroke-width="1.25" fill="none"/></svg>
<div class="clip" style="left:4px;top:439px;width:252px;height:21px">
<div class="t" style="left:73px;top:2px;transform:scaleX(1.0103);transform-origin:0 0;">CH1_LPDDR4_0_0_ck_t_a</div>
<div class="t" style="left:231.375px;top:2px;color:#7a7a7a;transform:scaleX(1.1431);transform-origin:0 0;">(2)</div>
</div>
<div class="t" style="left:264px;top:441px;transform:scaleX(0.9947);transform-origin:0 0;">OUT</div>
<div class="clip" style="left:396px;top:439px;width:94px;height:21px">
<div class="t" style="left:7px;top:2px;transform:scaleX(1.0048);transform-origin:0 0;">CH1_LPDDR4_0_0_ck_c_a</div>
</div>
<svg class="r" style="left:647px;top:442px" width="14" height="14"><rect x="0.5" y="0.5" width="13" height="13" rx="2.5" fill="#fff" stroke="#939393" stroke-width="1"/><path d="M2.6 6.9L5.4 9.7L11.6 3.5" stroke="#4e4e4e" stroke-width="2.1" fill="none"/></svg>
<div class="t" style="left:450px;width:300px;text-align:right;top:441px;transform:scaleX(1.1281);transform-origin:100% 0;">701</div>
<div class="t" style="left:764px;top:441px;transform:scaleX(1.0094);transform-origin:0 0;">DIFF_LVSTL_11*</div>
<svg class="r" style="left:951px;top:447px" width="8" height="5"><path d="M0 0H7.5L3.8 4.2Z" fill="url(#ag)"/></svg>
<div class="t" style="left:864px;width:300px;text-align:right;top:441px;transform:scaleX(1.1284);transform-origin:100% 0;">1.100</div>
<div class="r" style="left:4px;top:482px;width:1169px;height:1px;background:#e3e3e3;"></div>
<div class="r" style="left:256px;top:461px;width:1px;height:21px;background:#e3e3e3;"></div>
<div class="r" style="left:395px;top:461px;width:1px;height:21px;background:#e3e3e3;"></div>
<div class="r" style="left:490px;top:461px;width:1px;height:21px;background:#e3e3e3;"></div>
<div class="r" style="left:629px;top:461px;width:1px;height:21px;background:#e3e3e3;"></div>
<div class="r" style="left:679px;top:461px;width:1px;height:21px;background:#e3e3e3;"></div>
<div class="r" style="left:756px;top:461px;width:1px;height:21px;background:#e3e3e3;"></div>
<div class="r" style="left:965px;top:461px;width:1px;height:21px;background:#e3e3e3;"></div>
<div class="r" style="left:1120px;top:461px;width:1px;height:21px;background:#e3e3e3;"></div>
<div class="r" style="left:1168px;top:461px;width:1px;height:21px;background:#e3e3e3;"></div>
<svg class="r" style="left:42px;top:467px" width="8" height="11"><path d="M1.3 0.7L5.5 4.9L1.3 9.1" stroke="#626262" stroke-width="1.2" fill="none"/></svg>
<svg class="r" style="left:59px;top:464px" width="13" height="14"><path d="M3.2 5.6L1 8.5L3.2 11.2V12.4H9.6V5.6Z" fill="#f9c65e" stroke="#6e6a62" stroke-width="0.95"/><path d="M5.3 1.1H11.1V9.5H5.6V6.8L3.4 5.6Z" fill="#f9c65e" stroke="#6e6a62" stroke-width="0.95"/><path d="M4.6 6.8L6.6 7.6L10 4.4" stroke="#2f4f8a" stroke-width="1.25" fill="none"/></svg>
<div class="clip" style="left:4px;top:461px;width:252px;height:21px">
<div class="t" style="left:73px;top:2px;transform:scaleX(1.0079);transform-origin:0 0;">CH1_LPDDR4_0_0_cke_a</div>
<div class="t" style="left:227.515625px;top:2px;color:#7a7a7a;transform:scaleX(1.1431);transform-origin:0 0;">(1)</div>
</div>
<div class="t" style="left:264px;top:463px;transform:scaleX(0.9947);transform-origin:0 0;">OUT</div>
<svg class="r" style="left:647px;top:464px" width="14" height="14"><rect x="0.5" y="0.5" width="13" height="13" rx="2.5" fill="#fff" stroke="#939393" stroke-width="1"/><path d="M2.6 6.9L5.4 9.7L11.6 3.5" stroke="#4e4e4e" stroke-width="2.1" fill="none"/></svg>
<div class="t" style="left:450px;width:300px;text-align:right;top:463px;transform:scaleX(1.1281);transform-origin:100% 0;">701</div>
<div class="t" style="left:764px;top:463px;transform:scaleX(1.0342);transform-origin:0 0;">LVSTL_11*</div>
<svg class="r" style="left:951px;top:469px" width="8" height="5"><path d="M0 0H7.5L3.8 4.2Z" fill="url(#ag)"/></svg>
<div class="t" style="left:864px;width:300px;text-align:right;top:463px;transform:scaleX(1.1284);transform-origin:100% 0;">1.100</div>
<div class="r" style="left:4px;top:504px;width:1169px;height:1px;background:#e3e3e3;"></div>
<div class="r" style="left:256px;top:483px;width:1px;height:21px;background:#e3e3e3;"></div>
<div class="r" style="left:395px;top:483px;width:1px;height:21px;background:#e3e3e3;"></div>
<div class="r" style="left:490px;top:483px;width:1px;height:21px;background:#e3e3e3;"></div>
<div class="r" style="left:629px;top:483px;width:1px;height:21px;background:#e3e3e3;"></div>
<div class="r" style="left:679px;top:483px;width:1px;height:21px;background:#e3e3e3;"></div>
<div class="r" style="left:756px;top:483px;width:1px;height:21px;background:#e3e3e3;"></div>
<div class="r" style="left:965px;top:483px;width:1px;height:21px;background:#e3e3e3;"></div>
<div class="r" style="left:1120px;top:483px;width:1px;height:21px;background:#e3e3e3;"></div>
<div class="r" style="left:1168px;top:483px;width:1px;height:21px;background:#e3e3e3;"></div>
<svg class="r" style="left:42px;top:489px" width="8" height="11"><path d="M1.3 0.7L5.5 4.9L1.3 9.1" stroke="#626262" stroke-width="1.2" fill="none"/></svg>
<svg class="r" style="left:59px;top:486px" width="13" height="14"><path d="M3.2 5.6L1 8.5L3.2 11.2V12.4H9.6V5.6Z" fill="#f9c65e" stroke="#6e6a62" stroke-width="0.95"/><path d="M5.3 1.1H11.1V9.5H5.6V6.8L3.4 5.6Z" fill="#f9c65e" stroke="#6e6a62" stroke-width="0.95"/><path d="M4.6 6.8L6.6 7.6L10 4.4" stroke="#2f4f8a" stroke-width="1.25" fill="none"/></svg>
<div class="clip" style="left:4px;top:483px;width:252px;height:21px">
<div class="t" style="left:73px;top:2px;transform:scaleX(1.0020);transform-origin:0 0;">CH1_LPDDR4_0_0_cs_a</div>
<div class="t" style="left:219.65625px;top:2px;color:#7a7a7a;transform:scaleX(1.1431);transform-origin:0 0;">(1)</div>
</div>
<div class="t" style="left:264px;top:485px;transform:scaleX(0.9947);transform-origin:0 0;">OUT</div>
<svg class="r" style="left:647px;top:486px" width="14" height="14"><rect x="0.5" y="0.5" width="13" height="13" rx="2.5" fill="#fff" stroke="#939393" stroke-width="1"/><path d="M2.6 6.9L5.4 9.7L11.6 3.5" stroke="#4e4e4e" stroke-width="2.1" fill="none"/></svg>
<div class="t" style="left:450px;width:300px;text-align:right;top:485px;transform:scaleX(1.1281);transform-origin:100% 0;">701</div>
<div class="t" style="left:764px;top:485px;transform:scaleX(1.0342);transform-origin:0 0;">LVSTL_11*</div>
<svg class="r" style="left:951px;top:491px" width="8" height="5"><path d="M0 0H7.5L3.8 4.2Z" fill="url(#ag)"/></svg>
<div class="t" style="left:864px;width:300px;text-align:right;top:485px;transform:scaleX(1.1284);transform-origin:100% 0;">1.100</div>
<div class="r" style="left:4px;top:526px;width:1169px;height:1px;background:#e3e3e3;"></div>
<div class="r" style="left:256px;top:505px;width:1px;height:21px;background:#e3e3e3;"></div>
<div class="r" style="left:395px;top:505px;width:1px;height:21px;background:#e3e3e3;"></div>
<div class="r" style="left:490px;top:505px;width:1px;height:21px;background:#e3e3e3;"></div>
<div class="r" style="left:629px;top:505px;width:1px;height:21px;background:#e3e3e3;"></div>
<div class="r" style="left:679px;top:505px;width:1px;height:21px;background:#e3e3e3;"></div>
<div class="r" style="left:756px;top:505px;width:1px;height:21px;background:#e3e3e3;"></div>
<div class="r" style="left:965px;top:505px;width:1px;height:21px;background:#e3e3e3;"></div>
<div class="r" style="left:1120px;top:505px;width:1px;height:21px;background:#e3e3e3;"></div>
<div class="r" style="left:1168px;top:505px;width:1px;height:21px;background:#e3e3e3;"></div>
<svg class="r" style="left:42px;top:511px" width="8" height="11"><path d="M1.3 0.7L5.5 4.9L1.3 9.1" stroke="#626262" stroke-width="1.2" fill="none"/></svg>
<svg class="r" style="left:59px;top:508px" width="13" height="14"><rect x="0.2" y="4" width="2.3" height="2.4" fill="#6e6a62"/><rect x="7.4" y="4" width="2.4" height="2.4" fill="#6e6a62"/><rect x="2.2" y="8.2" width="2.3" height="2.2" fill="#6e6a62"/><rect x="9.6" y="8.2" width="2.4" height="2.2" fill="#6e6a62"/><path d="M4.8 8.1H9.3L10 9.2V11.6L9.3 12.6H4.8L4.1 11.6V9.2Z" fill="#f9c65e" stroke="#6e6a62" stroke-width="0.95"/><path d="M3.2 1.1H7L7.8 2.2V6.9L7 7.9H3.2L2.4 6.9V2.2Z" fill="#f9c65e" stroke="#6e6a62" stroke-width="0.95"/><path d="M3.3 5.2L4.5 6.3L6.9 3.3" stroke="#2f4f8a" stroke-width="1.25" fill="none"/></svg>
<div class="clip" style="left:4px;top:505px;width:252px;height:21px">
<div class="t" style="left:73px;top:2px;transform:scaleX(1.0180);transform-origin:0 0;">CH1_LPDDR4_0_0_dmi_a</div>
<div class="t" style="left:229.71875px;top:2px;color:#7a7a7a;transform:scaleX(1.1431);transform-origin:0 0;">(2)</div>
</div>
<div class="t" style="left:264px;top:507px;transform:scaleX(1.0056);transform-origin:0 0;">INOUT</div>
<svg class="r" style="left:647px;top:508px" width="14" height="14"><rect x="0.5" y="0.5" width="13" height="13" rx="2.5" fill="#fff" stroke="#939393" stroke-width="1"/><path d="M2.6 6.9L5.4 9.7L11.6 3.5" stroke="#4e4e4e" stroke-width="2.1" fill="none"/></svg>
<div class="t" style="left:450px;width:300px;text-align:right;top:507px;transform:scaleX(1.1281);transform-origin:100% 0;">701</div>
<div class="t" style="left:764px;top:507px;transform:scaleX(1.0342);transform-origin:0 0;">LVSTL_11*</div>
<svg class="r" style="left:951px;top:513px" width="8" height="5"><path d="M0 0H7.5L3.8 4.2Z" fill="url(#ag)"/></svg>
<div class="t" style="left:864px;width:300px;text-align:right;top:507px;transform:scaleX(1.1284);transform-origin:100% 0;">1.100</div>
<div class="r" style="left:4px;top:548px;width:1169px;height:1px;background:#e3e3e3;"></div>
<div class="r" style="left:256px;top:527px;width:1px;height:21px;background:#e3e3e3;"></div>
<div class="r" style="left:395px;top:527px;width:1px;height:21px;background:#e3e3e3;"></div>
<div class="r" style="left:490px;top:527px;width:1px;height:21px;background:#e3e3e3;"></div>
<div class="r" style="left:629px;top:527px;width:1px;height:21px;background:#e3e3e3;"></div>
<div class="r" style="left:679px;top:527px;width:1px;height:21px;background:#e3e3e3;"></div>
<div class="r" style="left:756px;top:527px;width:1px;height:21px;background:#e3e3e3;"></div>
<div class="r" style="left:965px;top:527px;width:1px;height:21px;background:#e3e3e3;"></div>
<div class="r" style="left:1120px;top:527px;width:1px;height:21px;background:#e3e3e3;"></div>
<div class="r" style="left:1168px;top:527px;width:1px;height:21px;background:#e3e3e3;"></div>
<svg class="r" style="left:42px;top:533px" width="8" height="11"><path d="M1.3 0.7L5.5 4.9L1.3 9.1" stroke="#626262" stroke-width="1.2" fill="none"/></svg>
<svg class="r" style="left:59px;top:530px" width="13" height="14"><rect x="0.2" y="4" width="2.3" height="2.4" fill="#6e6a62"/><rect x="7.4" y="4" width="2.4" height="2.4" fill="#6e6a62"/><rect x="2.2" y="8.2" width="2.3" height="2.2" fill="#6e6a62"/><rect x="9.6" y="8.2" width="2.4" height="2.2" fill="#6e6a62"/><path d="M4.8 8.1H9.3L10 9.2V11.6L9.3 12.6H4.8L4.1 11.6V9.2Z" fill="#f9c65e" stroke="#6e6a62" stroke-width="0.95"/><path d="M3.2 1.1H7L7.8 2.2V6.9L7 7.9H3.2L2.4 6.9V2.2Z" fill="#f9c65e" stroke="#6e6a62" stroke-width="0.95"/><path d="M3.3 5.2L4.5 6.3L6.9 3.3" stroke="#2f4f8a" stroke-width="1.25" fill="none"/></svg>
<div class="clip" style="left:4px;top:527px;width:252px;height:21px">
<div class="t" style="left:73px;top:2px;transform:scaleX(1.0199);transform-origin:0 0;">CH1_LPDDR4_0_0_dmi_b</div>
<div class="t" style="left:230.0px;top:2px;color:#7a7a7a;transform:scaleX(1.1431);transform-origin:0 0;">(2)</div>
</div>
<div class="t" style="left:264px;top:529px;transform:scaleX(1.0056);transform-origin:0 0;">INOUT</div>
<svg class="r" style="left:647px;top:530px" width="14" height="14"><rect x="0.5" y="0.5" width="13" height="13" rx="2.5" fill="#fff" stroke="#939393" stroke-width="1"/><path d="M2.6 6.9L5.4 9.7L11.6 3.5" stroke="#4e4e4e" stroke-width="2.1" fill="none"/></svg>
<div class="t" style="left:450px;width:300px;text-align:right;top:529px;transform:scaleX(1.1281);transform-origin:100% 0;">701</div>
<div class="t" style="left:764px;top:529px;transform:scaleX(1.0342);transform-origin:0 0;">LVSTL_11*</div>
<svg class="r" style="left:951px;top:535px" width="8" height="5"><path d="M0 0H7.5L3.8 4.2Z" fill="url(#ag)"/></svg>
<div class="t" style="left:864px;width:300px;text-align:right;top:529px;transform:scaleX(1.1284);transform-origin:100% 0;">1.100</div>
<div class="r" style="left:4px;top:570px;width:1169px;height:1px;background:#e3e3e3;"></div>
<div class="r" style="left:256px;top:549px;width:1px;height:21px;background:#e3e3e3;"></div>
<div class="r" style="left:395px;top:549px;width:1px;height:21px;background:#e3e3e3;"></div>
<div class="r" style="left:490px;top:549px;width:1px;height:21px;background:#e3e3e3;"></div>
<div class="r" style="left:629px;top:549px;width:1px;height:21px;background:#e3e3e3;"></div>
<div class="r" style="left:679px;top:549px;width:1px;height:21px;background:#e3e3e3;"></div>
<div class="r" style="left:756px;top:549px;width:1px;height:21px;background:#e3e3e3;"></div>
<div class="r" style="left:965px;top:549px;width:1px;height:21px;background:#e3e3e3;"></div>
<div class="r" style="left:1120px;top:549px;width:1px;height:21px;background:#e3e3e3;"></div>
<div class="r" style="left:1168px;top:549px;width:1px;height:21px;background:#e3e3e3;"></div>
<svg class="r" style="left:42px;top:555px" width="8" height="11"><path d="M1.3 0.7L5.5 4.9L1.3 9.1" stroke="#626262" stroke-width="1.2" fill="none"/></svg>
<svg class="r" style="left:59px;top:552px" width="13" height="14"><rect x="0.2" y="4" width="2.3" height="2.4" fill="#6e6a62"/><rect x="7.4" y="4" width="2.4" height="2.4" fill="#6e6a62"/><rect x="2.2" y="8.2" width="2.3" height="2.2" fill="#6e6a62"/><rect x="9.6" y="8.2" width="2.4" height="2.2" fill="#6e6a62"/><path d="M4.8 8.1H9.3L10 9.2V11.6L9.3 12.6H4.8L4.1 11.6V9.2Z" fill="#f9c65e" stroke="#6e6a62" stroke-width="0.95"/><path d="M3.2 1.1H7L7.8 2.2V6.9L7 7.9H3.2L2.4 6.9V2.2Z" fill="#f9c65e" stroke="#6e6a62" stroke-width="0.95"/><path d="M3.3 5.2L4.5 6.3L6.9 3.3" stroke="#2f4f8a" stroke-width="1.25" fill="none"/></svg>
<div class="clip" style="left:4px;top:549px;width:252px;height:21px">
<div class="t" style="left:73px;top:2px;transform:scaleX(1.0092);transform-origin:0 0;">CH1_LPDDR4_0_0_dq_a</div>
<div class="t" style="left:222.109375px;top:2px;color:#7a7a7a;transform:scaleX(1.1384);transform-origin:0 0;">(16)</div>
</div>
<div class="t" style="left:264px;top:551px;transform:scaleX(1.0056);transform-origin:0 0;">INOUT</div>
<svg class="r" style="left:647px;top:552px" width="14" height="14"><rect x="0.5" y="0.5" width="13" height="13" rx="2.5" fill="#fff" stroke="#939393" stroke-width="1"/><path d="M2.6 6.9L5.4 9.7L11.6 3.5" stroke="#4e4e4e" stroke-width="2.1" fill="none"/></svg>
<div class="t" style="left:450px;width:300px;text-align:right;top:551px;transform:scaleX(1.1281);transform-origin:100% 0;">701</div>
<div class="t" style="left:764px;top:551px;transform:scaleX(1.0342);transform-origin:0 0;">LVSTL_11*</div>
<svg class="r" style="left:951px;top:557px" width="8" height="5"><path d="M0 0H7.5L3.8 4.2Z" fill="url(#ag)"/></svg>
<div class="t" style="left:864px;width:300px;text-align:right;top:551px;transform:scaleX(1.1284);transform-origin:100% 0;">1.100</div>
<div class="r" style="left:4px;top:592px;width:1169px;height:1px;background:#e3e3e3;"></div>
<div class="r" style="left:256px;top:571px;width:1px;height:21px;background:#e3e3e3;"></div>
<div class="r" style="left:395px;top:571px;width:1px;height:21px;background:#e3e3e3;"></div>
<div class="r" style="left:490px;top:571px;width:1px;height:21px;background:#e3e3e3;"></div>
<div class="r" style="left:629px;top:571px;width:1px;height:21px;background:#e3e3e3;"></div>
<div class="r" style="left:679px;top:571px;width:1px;height:21px;background:#e3e3e3;"></div>
<div class="r" style="left:756px;top:571px;width:1px;height:21px;background:#e3e3e3;"></div>
<div class="r" style="left:965px;top:571px;width:1px;height:21px;background:#e3e3e3;"></div>
<div class="r" style="left:1120px;top:571px;width:1px;height:21px;background:#e3e3e3;"></div>
<div class="r" style="left:1168px;top:571px;width:1px;height:21px;background:#e3e3e3;"></div>
<svg class="r" style="left:42px;top:577px" width="8" height="11"><path d="M1.3 0.7L5.5 4.9L1.3 9.1" stroke="#626262" stroke-width="1.2" fill="none"/></svg>
<svg class="r" style="left:59px;top:574px" width="13" height="14"><rect x="0.2" y="4" width="2.3" height="2.4" fill="#6e6a62"/><rect x="7.4" y="4" width="2.4" height="2.4" fill="#6e6a62"/><rect x="2.2" y="8.2" width="2.3" height="2.2" fill="#6e6a62"/><rect x="9.6" y="8.2" width="2.4" height="2.2" fill="#6e6a62"/><path d="M4.8 8.1H9.3L10 9.2V11.6L9.3 12.6H4.8L4.1 11.6V9.2Z" fill="#f9c65e" stroke="#6e6a62" stroke-width="0.95"/><path d="M3.2 1.1H7L7.8 2.2V6.9L7 7.9H3.2L2.4 6.9V2.2Z" fill="#f9c65e" stroke="#6e6a62" stroke-width="0.95"/><path d="M3.3 5.2L4.5 6.3L6.9 3.3" stroke="#2f4f8a" stroke-width="1.25" fill="none"/></svg>
<div class="clip" style="left:4px;top:571px;width:252px;height:21px">
<div class="t" style="left:73px;top:2px;transform:scaleX(1.0112);transform-origin:0 0;">CH1_LPDDR4_0_0_dq_b</div>
<div class="t" style="left:222.390625px;top:2px;color:#7a7a7a;transform:scaleX(1.1384);transform-origin:0 0;">(16)</div>
</div>
<div class="t" style="left:264px;top:573px;transform:scaleX(1.0056);transform-origin:0 0;">INOUT</div>
<svg class="r" style="left:647px;top:574px" width="14" height="14"><rect x="0.5" y="0.5" width="13" height="13" rx="2.5" fill="#fff" stroke="#939393" stroke-width="1"/><path d="M2.6 6.9L5.4 9.7L11.6 3.5" stroke="#4e4e4e" stroke-width="2.1" fill="none"/></svg>
<div class="t" style="left:450px;width:300px;text-align:right;top:573px;transform:scaleX(1.1281);transform-origin:100% 0;">701</div>
<div class="t" style="left:764px;top:573px;transform:scaleX(1.0342);transform-origin:0 0;">LVSTL_11*</div>
<svg class="r" style="left:951px;top:579px" width="8" height="5"><path d="M0 0H7.5L3.8 4.2Z" fill="url(#ag)"/></svg>
<div class="t" style="left:864px;width:300px;text-align:right;top:573px;transform:scaleX(1.1284);transform-origin:100% 0;">1.100</div>
<div class="r" style="left:4px;top:614px;width:1169px;height:1px;background:#e3e3e3;"></div>
<div class="r" style="left:256px;top:593px;width:1px;height:21px;background:#e3e3e3;"></div>
<div class="r" style="left:395px;top:593px;width:1px;height:21px;background:#e3e3e3;"></div>
<div class="r" style="left:490px;top:593px;width:1px;height:21px;background:#e3e3e3;"></div>
<div class="r" style="left:629px;top:593px;width:1px;height:21px;background:#e3e3e3;"></div>
<div class="r" style="left:679px;top:593px;width:1px;height:21px;background:#e3e3e3;"></div>
<div class="r" style="left:756px;top:593px;width:1px;height:21px;background:#e3e3e3;"></div>
<div class="r" style="left:965px;top:593px;width:1px;height:21px;background:#e3e3e3;"></div>
<div class="r" style="left:1120px;top:593px;width:1px;height:21px;background:#e3e3e3;"></div>
<div class="r" style="left:1168px;top:593px;width:1px;height:21px;background:#e3e3e3;"></div>
<svg class="r" style="left:42px;top:599px" width="8" height="11"><path d="M1.3 0.7L5.5 4.9L1.3 9.1" stroke="#626262" stroke-width="1.2" fill="none"/></svg>
<svg class="r" style="left:59px;top:596px" width="13" height="14"><rect x="0.2" y="4" width="2.3" height="2.4" fill="#6e6a62"/><rect x="7.4" y="4" width="2.4" height="2.4" fill="#6e6a62"/><rect x="2.2" y="8.2" width="2.3" height="2.2" fill="#6e6a62"/><rect x="9.6" y="8.2" width="2.4" height="2.2" fill="#6e6a62"/><path d="M4.8 8.1H9.3L10 9.2V11.6L9.3 12.6H4.8L4.1 11.6V9.2Z" fill="#f9c65e" stroke="#6e6a62" stroke-width="0.95"/><path d="M3.2 1.1H7L7.8 2.2V6.9L7 7.9H3.2L2.4 6.9V2.2Z" fill="#f9c65e" stroke="#6e6a62" stroke-width="0.95"/><path d="M3.3 5.2L4.5 6.3L6.9 3.3" stroke="#2f4f8a" stroke-width="1.25" fill="none"/></svg>
<div class="clip" style="left:4px;top:593px;width:252px;height:21px">
<div class="t" style="left:73px;top:2px;transform:scaleX(1.0129);transform-origin:0 0;">CH1_LPDDR4_0_0_dqs_t_a</div>
<div class="t" style="left:239.53125px;top:2px;color:#7a7a7a;transform:scaleX(1.1431);transform-origin:0 0;">(4)</div>
</div>
<div class="t" style="left:264px;top:595px;transform:scaleX(1.0056);transform-origin:0 0;">INOUT</div>
<div class="clip" style="left:396px;top:593px;width:94px;height:21px">
<div class="t" style="left:7px;top:2px;transform:scaleX(1.0077);transform-origin:0 0;">CH1_LPDDR4_0_0_dqs_c_a</div>
</div>
<svg class="r" style="left:647px;top:596px" width="14" height="14"><rect x="0.5" y="0.5" width="13" height="13" rx="2.5" fill="#fff" stroke="#939393" stroke-width="1"/><path d="M2.6 6.9L5.4 9.7L11.6 3.5" stroke="#4e4e4e" stroke-width="2.1" fill="none"/></svg>
<div class="t" style="left:450px;width:300px;text-align:right;top:595px;transform:scaleX(1.1281);transform-origin:100% 0;">701</div>
<div class="t" style="left:764px;top:595px;transform:scaleX(1.0094);transform-origin:0 0;">DIFF_LVSTL_11*</div>
<svg class="r" style="left:951px;top:601px" width="8" height="5"><path d="M0 0H7.5L3.8 4.2Z" fill="url(#ag)"/></svg>
<div class="t" style="left:864px;width:300px;text-align:right;top:595px;transform:scaleX(1.1284);transform-origin:100% 0;">1.100</div>
<div class="r" style="left:4px;top:636px;width:1169px;height:1px;background:#e3e3e3;"></div>
<div class="r" style="left:256px;top:615px;width:1px;height:21px;background:#e3e3e3;"></div>
<div class="r" style="left:395px;top:615px;width:1px;height:21px;background:#e3e3e3;"></div>
<div class="r" style="left:490px;top:615px;width:1px;height:21px;background:#e3e3e3;"></div>
<div class="r" style="left:629px;top:615px;width:1px;height:21px;background:#e3e3e3;"></div>
<div class="r" style="left:679px;top:615px;width:1px;height:21px;background:#e3e3e3;"></div>
<div class="r" style="left:756px;top:615px;width:1px;height:21px;background:#e3e3e3;"></div>
<div class="r" style="left:965px;top:615px;width:1px;height:21px;background:#e3e3e3;"></div>
<div class="r" style="left:1120px;top:615px;width:1px;height:21px;background:#e3e3e3;"></div>
<div class="r" style="left:1168px;top:615px;width:1px;height:21px;background:#e3e3e3;"></div>
<svg class="r" style="left:42px;top:621px" width="8" height="11"><path d="M1.3 0.7L5.5 4.9L1.3 9.1" stroke="#626262" stroke-width="1.2" fill="none"/></svg>
<svg class="r" style="left:59px;top:618px" width="13" height="14"><rect x="0.2" y="4" width="2.3" height="2.4" fill="#6e6a62"/><rect x="7.4" y="4" width="2.4" height="2.4" fill="#6e6a62"/><rect x="2.2" y="8.2" width="2.3" height="2.2" fill="#6e6a62"/><rect x="9.6" y="8.2" width="2.4" height="2.2" fill="#6e6a62"/><path d="M4.8 8.1H9.3L10 9.2V11.6L9.3 12.6H4.8L4.1 11.6V9.2Z" fill="#f9c65e" stroke="#6e6a62" stroke-width="0.95"/><path d="M3.2 1.1H7L7.8 2.2V6.9L7 7.9H3.2L2.4 6.9V2.2Z" fill="#f9c65e" stroke="#6e6a62" stroke-width="0.95"/><path d="M3.3 5.2L4.5 6.3L6.9 3.3" stroke="#2f4f8a" stroke-width="1.25" fill="none"/></svg>
<div class="clip" style="left:4px;top:615px;width:252px;height:21px">
<div class="t" style="left:73px;top:2px;transform:scaleX(1.0147);transform-origin:0 0;">CH1_LPDDR4_0_0_dqs_t_b</div>
<div class="t" style="left:239.8125px;top:2px;color:#7a7a7a;transform:scaleX(1.1431);transform-origin:0 0;">(4)</div>
</div>
<div class="t" style="left:264px;top:617px;transform:scaleX(1.0056);transform-origin:0 0;">INOUT</div>
<div class="clip" style="left:396px;top:615px;width:94px;height:21px">
<div class="t" style="left:7px;top:2px;transform:scaleX(1.0094);transform-origin:0 0;">CH1_LPDDR4_0_0_dqs_c_b</div>
</div>
<svg class="r" style="left:647px;top:618px" width="14" height="14"><rect x="0.5" y="0.5" width="13" height="13" rx="2.5" fill="#fff" stroke="#939393" stroke-width="1"/><path d="M2.6 6.9L5.4 9.7L11.6 3.5" stroke="#4e4e4e" stroke-width="2.1" fill="none"/></svg>
<div class="t" style="left:450px;width:300px;text-align:right;top:617px;transform:scaleX(1.1281);transform-origin:100% 0;">701</div>
<div class="t" style="left:764px;top:617px;transform:scaleX(1.0094);transform-origin:0 0;">DIFF_LVSTL_11*</div>
<svg class="r" style="left:951px;top:623px" width="8" height="5"><path d="M0 0H7.5L3.8 4.2Z" fill="url(#ag)"/></svg>
<div class="t" style="left:864px;width:300px;text-align:right;top:617px;transform:scaleX(1.1284);transform-origin:100% 0;">1.100</div>
<div class="r" style="left:4px;top:658px;width:1169px;height:1px;background:#e3e3e3;"></div>
<div class="r" style="left:256px;top:637px;width:1px;height:21px;background:#e3e3e3;"></div>
<div class="r" style="left:395px;top:637px;width:1px;height:21px;background:#e3e3e3;"></div>
<div class="r" style="left:490px;top:637px;width:1px;height:21px;background:#e3e3e3;"></div>
<div class="r" style="left:629px;top:637px;width:1px;height:21px;background:#e3e3e3;"></div>
<div class="r" style="left:679px;top:637px;width:1px;height:21px;background:#e3e3e3;"></div>
<div class="r" style="left:756px;top:637px;width:1px;height:21px;background:#e3e3e3;"></div>
<div class="r" style="left:965px;top:637px;width:1px;height:21px;background:#e3e3e3;"></div>
<div class="r" style="left:1120px;top:637px;width:1px;height:21px;background:#e3e3e3;"></div>
<div class="r" style="left:1168px;top:637px;width:1px;height:21px;background:#e3e3e3;"></div>
<svg class="r" style="left:42px;top:643px" width="8" height="11"><path d="M1.3 0.7L5.5 4.9L1.3 9.1" stroke="#626262" stroke-width="1.2" fill="none"/></svg>
<svg class="r" style="left:59px;top:640px" width="13" height="14"><path d="M3.2 5.6L1 8.5L3.2 11.2V12.4H9.6V5.6Z" fill="#f9c65e" stroke="#6e6a62" stroke-width="0.95"/><path d="M5.3 1.1H11.1V9.5H5.6V6.8L3.4 5.6Z" fill="#f9c65e" stroke="#6e6a62" stroke-width="0.95"/><path d="M4.6 6.8L6.6 7.6L10 4.4" stroke="#2f4f8a" stroke-width="1.25" fill="none"/></svg>
<div class="clip" style="left:4px;top:637px;width:252px;height:21px">
<div class="t" style="left:73px;top:2px;transform:scaleX(1.0207);transform-origin:0 0;">CH1_LPDDR4_0_0_reset_n</div>
<div class="t" style="left:237.921875px;top:2px;color:#7a7a7a;transform:scaleX(1.1431);transform-origin:0 0;">(1)</div>
</div>
<div class="t" style="left:264px;top:639px;transform:scaleX(0.9947);transform-origin:0 0;">OUT</div>
<svg class="r" style="left:647px;top:640px" width="14" height="14"><rect x="0.5" y="0.5" width="13" height="13" rx="2.5" fill="#fff" stroke="#939393" stroke-width="1"/><path d="M2.6 6.9L5.4 9.7L11.6 3.5" stroke="#4e4e4e" stroke-width="2.1" fill="none"/></svg>
<div class="t" style="left:450px;width:300px;text-align:right;top:639px;transform:scaleX(1.1281);transform-origin:100% 0;">702</div>
<div class="t" style="left:764px;top:639px;color:#f01c1c;transform:scaleX(1.1553);transform-origin:0 0;">default</div>
<div class="t" style="left:811.28125px;top:639px;transform:scaleX(1.0142);transform-origin:0 0;">(UNDEFINED)</div>
<svg class="r" style="left:951px;top:645px" width="8" height="5"><path d="M0 0H7.5L3.8 4.2Z" fill="url(#ag)"/></svg>
<div class="r" style="left:4px;top:680px;width:1169px;height:1px;background:#e3e3e3;"></div>
<svg class="r" style="left:59px;top:664px" width="13" height="11"><path d="M0.5 10V0.5H5L6 2H10.5V4.5" stroke="#cacaca" stroke-width="1" fill="#f4f4f4"/><path d="M1.5 10L3 4.5H12.5L11 10Z" fill="#cdcdcd"/></svg>
<div class="clip" style="left:4px;top:659px;width:252px;height:21px">
<div class="t" style="left:73px;top:2px;transform:scaleX(1.1063);transform-origin:0 0;">Scalar ports</div>
<div class="t" style="left:150.71875px;top:2px;color:#7a7a7a;transform:scaleX(1.1431);transform-origin:0 0;">(0)</div>
</div>
<div class="r" style="left:4px;top:702px;width:1169px;height:1px;background:#e3e3e3;"></div>
<div class="r" style="left:256px;top:681px;width:1px;height:21px;background:#e3e3e3;"></div>
<div class="r" style="left:395px;top:681px;width:1px;height:21px;background:#e3e3e3;"></div>
<div class="r" style="left:490px;top:681px;width:1px;height:21px;background:#e3e3e3;"></div>
<div class="r" style="left:629px;top:681px;width:1px;height:21px;background:#e3e3e3;"></div>
<div class="r" style="left:679px;top:681px;width:1px;height:21px;background:#e3e3e3;"></div>
<div class="r" style="left:756px;top:681px;width:1px;height:21px;background:#e3e3e3;"></div>
<div class="r" style="left:965px;top:681px;width:1px;height:21px;background:#e3e3e3;"></div>
<div class="r" style="left:1120px;top:681px;width:1px;height:21px;background:#e3e3e3;"></div>
<div class="r" style="left:1168px;top:681px;width:1px;height:21px;background:#e3e3e3;"></div>
<svg class="r" style="left:26px;top:687px" width="8" height="11"><path d="M1.3 0.7L5.5 4.9L1.3 9.1" stroke="#626262" stroke-width="1.2" fill="none"/></svg>
<svg class="r" style="left:43px;top:686px" width="13" height="11"><path d="M0.5 10V1H5.5L6.5 2.5H10.5V5" stroke="#c9c9c9" stroke-width="1" fill="#f3f3f3"/><path d="M2 10L3.5 5H7V10Z" fill="#cfcfcf"/><rect x="5.5" y="4.5" width="5" height="5.5" fill="#fff" stroke="#aaa" stroke-width="1"/><path d="M6.7 7.3L7.7 8.3L9.4 6.2" stroke="#4a6cb0" stroke-width="0.9" fill="none"/><path d="M10.5 6L12 7.3L10.5 8.6" fill="#aaa"/></svg>
<div class="clip" style="left:4px;top:681px;width:252px;height:21px">
<div class="t" style="left:57px;top:2px;transform:scaleX(1.0711);transform-origin:0 0;">sys_clk0_0_54576</div>
<div class="t" style="left:171.828125px;top:2px;color:#7a7a7a;transform:scaleX(1.1431);transform-origin:0 0;">(2)</div>
</div>
<div class="t" style="left:264px;top:683px;transform:scaleX(1.0288);transform-origin:0 0;">IN</div>
<svg class="r" style="left:647px;top:684px" width="14" height="14"><rect x="0.5" y="0.5" width="13" height="13" rx="2.5" fill="#fff" stroke="#939393" stroke-width="1"/><path d="M2.6 6.9L5.4 9.7L11.6 3.5" stroke="#4e4e4e" stroke-width="2.1" fill="none"/></svg>
<div class="t" style="left:450px;width:300px;text-align:right;top:683px;transform:scaleX(1.1281);transform-origin:100% 0;">702</div>
<div class="t" style="left:764px;top:683px;color:#f01c1c;transform:scaleX(1.1553);transform-origin:0 0;">default</div>
<div class="t" style="left:811.28125px;top:683px;transform:scaleX(0.9995);transform-origin:0 0;">(DIFF_UNDEFINED)</div>
<svg class="r" style="left:951px;top:689px" width="8" height="5"><path d="M0 0H7.5L3.8 4.2Z" fill="url(#ag)"/></svg>
<div class="r" style="left:4px;top:724px;width:1169px;height:1px;background:#e3e3e3;"></div>
<svg class="r" style="left:43px;top:708px" width="13" height="11"><path d="M0.5 10V0.5H5L6 2H10.5V4.5" stroke="#cacaca" stroke-width="1" fill="#f4f4f4"/><path d="M1.5 10L3 4.5H12.5L11 10Z" fill="#cdcdcd"/></svg>
<div class="clip" style="left:4px;top:703px;width:252px;height:21px">
<div class="t" style="left:57px;top:2px;transform:scaleX(1.1063);transform-origin:0 0;">Scalar ports</div>
<div class="t" style="left:134.71875px;top:2px;color:#7a7a7a;transform:scaleX(1.1431);transform-origin:0 0;">(0)</div>
</div>
</body></html>
